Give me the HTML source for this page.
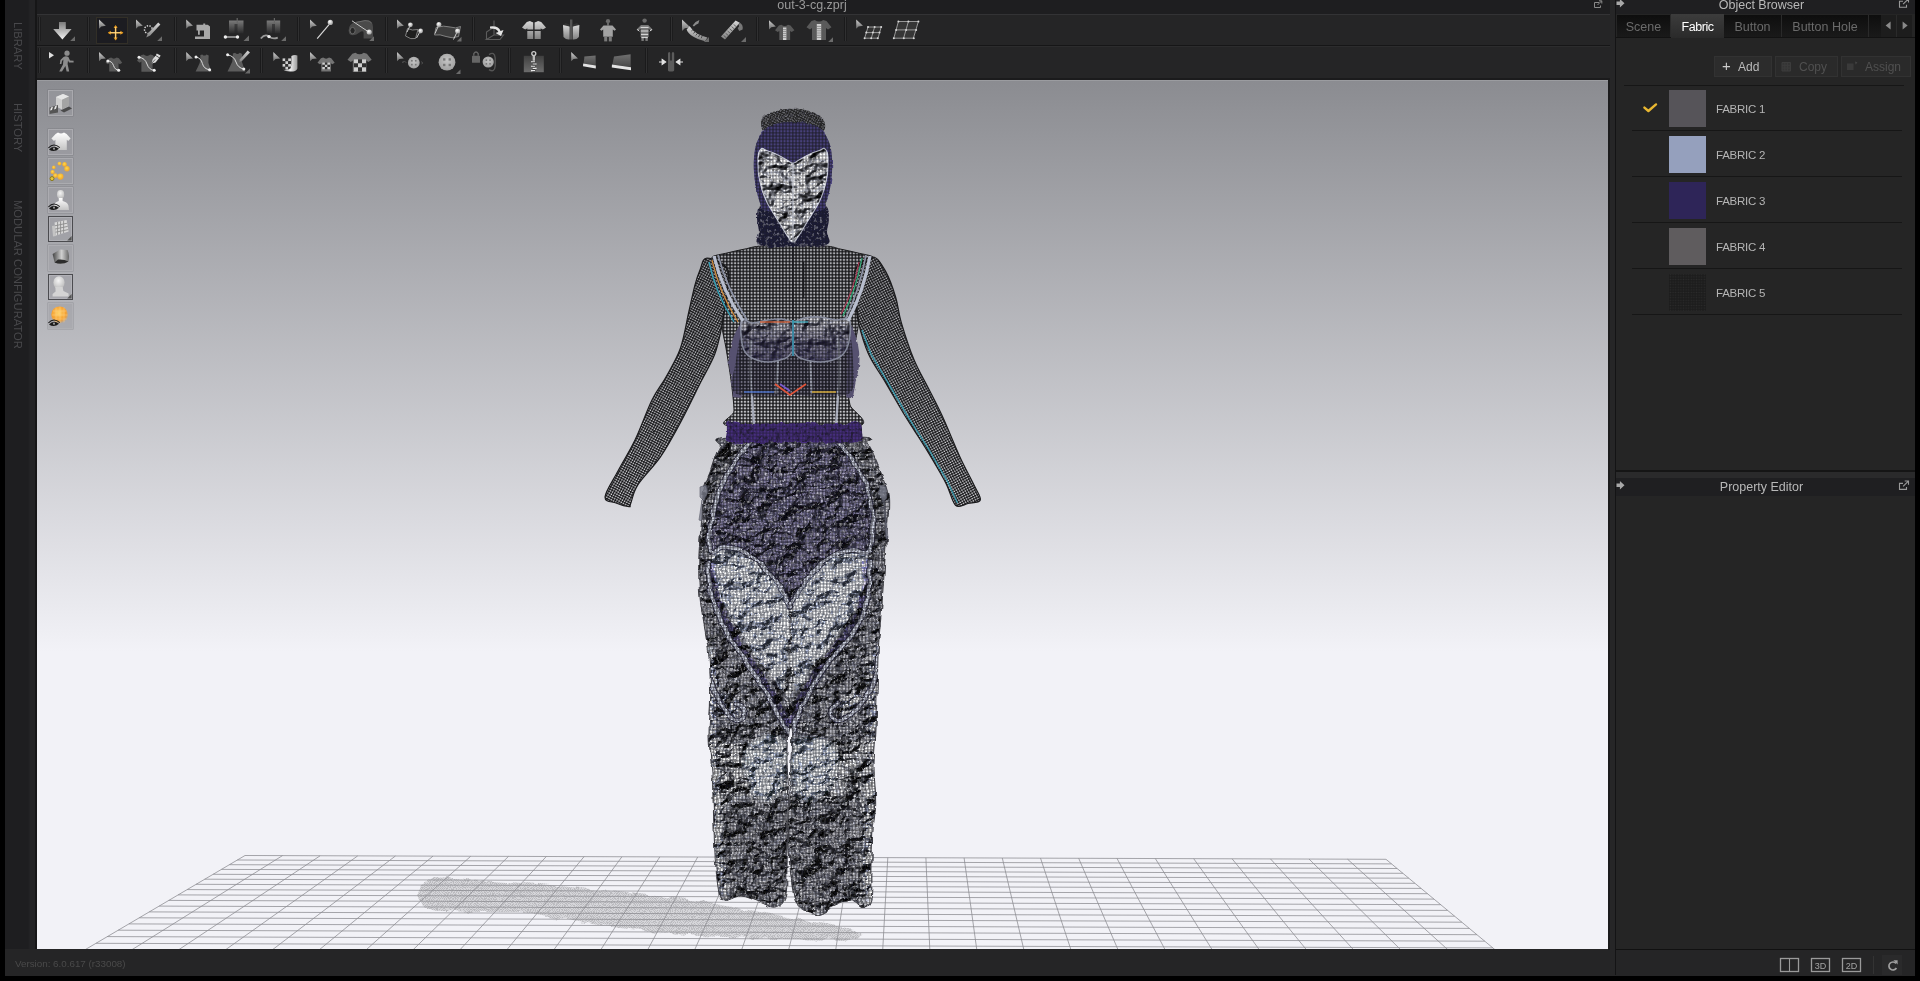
<!DOCTYPE html>
<html><head><meta charset="utf-8"><title>CLO</title>
<style>
*{box-sizing:border-box;margin:0;padding:0}
html,body{width:1920px;height:981px;overflow:hidden;background:#000;font-family:"Liberation Sans",sans-serif;font-size:12px;color:#bbb}
.a{position:absolute}
.tab,.btn span,.frow,.tx{opacity:0.999}
#app{position:absolute;left:0;top:0;width:1920px;height:981px;background:#000;overflow:hidden}
#side{left:5px;top:0;width:30px;height:976px;background:linear-gradient(to right,#1e1e20 0,#1e1e20 23px,#232325 25px,#232325 100%)}
#sideline{left:35px;top:0;width:2px;height:975px;background:#161617}
#title{left:37px;top:0;width:1573px;height:14px;background:#1e1e20}
#tb1{left:37px;top:14px;width:1573px;height:31px;background:#252526;border-top:1px solid #333335}
#tb2{left:37px;top:46px;width:1573px;height:32px;background:#252526;border-top:1px solid #2c2c2d}
#tbsep{left:37px;top:45px;width:1573px;height:1px;background:#161617}
#tbbot{left:37px;top:78px;width:1573px;height:2px;background:#1b1b1c}
#vp{left:37px;top:80px;width:1571px;height:869px;background:linear-gradient(to bottom,#9b9ca0 0,#9b9ca0 1px,#8b8c91 1.5px,#f2f2f7 572px,#f2f2f7 100%);overflow:hidden}
#vpr{left:1608px;top:80px;width:2px;height:870px;background:#1b1b1c}
#split{left:1610px;top:0;width:5px;height:976px;background:#262627}
#splitl{left:1615px;top:0;width:1px;height:975px;background:#141415}
#status{left:5px;top:949px;width:1910px;height:27px;background:#252526}
#rp{left:1616px;top:0;width:299px;height:950px;background:#252525}
#rph{left:1616px;top:0;width:299px;height:14px;background:#1f1f21}
#tabs{left:1616px;top:14px;width:299px;height:24px;background:#252525}
#tabsbg{left:1617px;top:15px;width:264px;height:22px;background:linear-gradient(#0e0e0e,#1a1a1a)}
#tabline{left:1616px;top:37px;width:299px;height:1px;background:#121212}
.tab{top:15px;height:22px;line-height:24px;text-align:center;color:#6a6a6a;font-size:12.5px;border-right:1px solid #2a2a2a}
.tab.on{background:linear-gradient(#3c3c3c,#2a2a2a);color:#fff;letter-spacing:-0.45px;border:0;top:14px;height:24px;line-height:26px}
.btn{top:56px;height:21px;background:#2c2c2c;border:1px solid #323232;color:#bbb;font-size:12px;line-height:20px}
.btn.dis{color:#505050;background:#2a2a2a}
.hl{height:1px;background:#161616;border-bottom:0}
.frow{left:1716px;font-size:11.5px;color:#b4b4b4;line-height:14px;letter-spacing:-0.25px}
.sw{left:1669px;width:37px;height:37px}

.vt{position:absolute;left:18px;transform-origin:0 0;transform:rotate(90deg);white-space:nowrap;font-size:11.2px;color:#48484b;line-height:12px;height:12px;opacity:0.999}
.vb{position:absolute;left:47.5px;width:25.5px;height:26px;border:1px solid rgba(178,178,183,.7);background:rgba(156,156,161,.5);box-shadow:0 0 0 0.5px rgba(90,90,95,.35)}
.vb.dk{border-color:rgba(60,60,64,.85);box-shadow:inset 0 0 0 1px rgba(190,190,195,.5)}
</style></head>
<body><div id="app">
<div id="side" class="a"></div><div id="sideline" class="a"></div>
<div id="title" class="a"></div><div id="tb1" class="a"></div><div id="tbsep" class="a"></div><div id="tb2" class="a"></div><div id="tbbot" class="a"></div>
<div id="status" class="a"></div>
<div id="split" class="a"></div><div id="splitl" class="a"></div>
<div id="rp" class="a"></div><div id="rph" class="a"></div><div id="tabs" class="a"></div><div id="tabsbg" class="a"></div><div id="tabline" class="a"></div>
<div class="a tab " style="left:1617px;width:54px">Scene</div>
<div class="a tab on" style="left:1671px;width:53px">Fabric</div>
<div class="a tab " style="left:1724px;width:58px">Button</div>
<div class="a tab " style="left:1782px;width:87px">Button Hole</div>
<div class="a" style="left:1616px;top:-2px;width:291px;text-align:center;font-size:12.5px;color:#b8b8b8;line-height:14px;opacity:0.999">Object Browser</div>
<div class="a" style="left:37px;top:-2px;width:1550px;text-align:center;font-size:12.5px;color:#9a9a9a;line-height:14px;opacity:0.999">out-3-cg.zprj</div>
<div class="a btn" style="left:1714px;width:58px"><span class="a" style="left:7px;top:-1px;font-size:15px;color:#ccc">+</span><span class="a" style="left:23px;top:0">Add</span></div>
<div class="a btn dis" style="left:1775px;width:63px"><span class="a" style="left:23px;top:0">Copy</span></div>
<div class="a btn dis" style="left:1841px;width:70px"><span class="a" style="left:23px;top:0">Assign</span></div>
<div class="a hl" style="left:1624px;top:85px;width:280px"></div>
<div class="a sw" style="top:90px;background:#565459"></div>
<div class="a frow" style="top:102px">FABRIC 1</div>
<div class="a hl" style="left:1632px;top:130px;width:270px"></div>
<div class="a sw" style="top:136px;background:#95a0bd"></div>
<div class="a frow" style="top:148px">FABRIC 2</div>
<div class="a hl" style="left:1632px;top:176px;width:270px"></div>
<div class="a sw" style="top:182px;background:#2e2558"></div>
<div class="a frow" style="top:194px">FABRIC 3</div>
<div class="a hl" style="left:1632px;top:222px;width:270px"></div>
<div class="a sw" style="top:228px;background:#5f5c5e"></div>
<div class="a frow" style="top:240px">FABRIC 4</div>
<div class="a hl" style="left:1632px;top:268px;width:270px"></div>
<div class="a sw" style="top:274px;background:#1d1d1d"></div>
<div class="a frow" style="top:286px">FABRIC 5</div>
<div class="a hl" style="left:1632px;top:314px;width:270px"></div>
<div class="a" style="left:1616px;top:470px;width:299px;height:2px;background:#151515"></div>
<div class="a" style="left:1616px;top:472px;width:299px;height:6px;background:#2a2a2b"></div>
<div class="a" style="left:1616px;top:478px;width:299px;height:18px;background:#1f1f21"></div>
<div class="a" style="left:1616px;top:479px;width:291px;text-align:center;font-size:12.5px;color:#b8b8b8;line-height:16px;opacity:0.999">Property Editor</div>
<div class="a" style="left:1616px;top:949px;width:299px;height:1px;background:#111"></div>
<div class="a" style="left:15px;top:958px;font-size:9.8px;color:#4a4a4a;line-height:12px;opacity:0.999">Version: 6.0.617 (r33008)</div>
<div id="vp" class="a"><svg class="a" style="left:0;top:0" width="1571" height="869" viewBox="37 80 1571 869">
<defs id="defs"></defs>
<defs><pattern id="shd" width="2" height="2" patternUnits="userSpaceOnUse"><rect width="2" height="2" fill="#d3d3d7"/><rect width="1" height="1" fill="#b4b4b8"/><rect x="1" y="1" width="1" height="1" fill="#bdbdc1"/></pattern><filter id="shr" x="-5%" y="-10%" width="110%" height="120%"><feTurbulence type="fractalNoise" baseFrequency="0.08" numOctaves="2" seed="2" result="t"/><feDisplacementMap in="SourceGraphic" in2="t" scale="7" xChannelSelector="R" yChannelSelector="G"/></filter></defs><path d="M420 884 L432 879 L455 878 L491 881 L540 884 L600 890 L686 899 L760 912 L853 929 L864 935 L846 940 L780 939 L699 936 L620 928 L560 919 L520 912 L480 912 L440 911 L422 906 L417 895 Z" fill="url(#shd)" opacity="0.9" filter="url(#shr)"/>
<path d="M245.0 855.5L81.2 952.0M282.5 855.6L128.3 952.0M320.1 855.8L175.3 952.0M357.7 855.9L222.4 952.0M395.4 856.0L269.5 952.0M433.0 856.1L316.6 952.0M470.7 856.3L363.7 952.0M508.5 856.4L410.8 952.0M546.3 856.5L457.9 952.0M584.1 856.6L505.0 952.0M621.9 856.8L552.2 952.0M659.8 856.9L599.4 952.0M697.7 857.0L646.5 952.0M735.7 857.1L693.7 952.0M773.6 857.3L740.9 952.0M811.7 857.4L788.1 952.0M849.7 857.5L835.4 952.0M887.8 857.6L882.6 952.0M925.9 857.8L929.9 952.0M964.1 857.9L977.1 952.0M1002.3 858.0L1024.4 952.0M1040.5 858.1L1071.7 952.0M1078.7 858.3L1119.0 952.0M1117.0 858.4L1166.3 952.0M1155.3 858.5L1213.6 952.0M1193.7 858.7L1260.9 952.0M1232.1 858.8L1308.3 952.0M1270.5 858.9L1355.6 952.0M1309.0 859.0L1403.0 952.0M1347.5 859.2L1450.4 952.0M1386.0 859.3L1497.8 952.0M245.0 855.5L1386.0 859.3M237.3 860.0L1391.5 863.9M229.5 864.7L1397.1 868.5M221.4 869.4L1402.9 873.3M213.2 874.3L1408.8 878.2M204.7 879.2L1414.9 883.3M196.0 884.3L1421.1 888.4M187.2 889.6L1427.5 893.7M178.1 894.9L1434.0 899.1M168.7 900.4L1440.7 904.7M159.2 906.1L1447.6 910.4M149.3 911.9L1454.6 916.2M139.3 917.8L1461.9 922.2M128.9 923.9L1469.3 928.4M118.2 930.2L1476.9 934.7M107.3 936.6L1484.8 941.2M96.1 943.3L1492.8 947.9M84.5 950.1L1501.1 954.8M72.6 957.1L1509.7 961.9" stroke="#8a8a8f" stroke-width="0.75" fill="none"/>
<defs>
<pattern id="mesh" width="3.3" height="3.3" patternUnits="userSpaceOnUse"><path d="M0 0.8H3.3M0.8 0V3.3" stroke="#141416" stroke-width="1.28"/></pattern>
<pattern id="meshL" width="2.5" height="2.5" patternUnits="userSpaceOnUse" patternTransform="rotate(28)"><path d="M0 0.6H2.5M0.6 0V2.5" stroke="#161618" stroke-width="1.06"/></pattern>
<pattern id="meshR" width="2.5" height="2.5" patternUnits="userSpaceOnUse" patternTransform="rotate(-28)"><path d="M0 0.6H2.5M0.6 0V2.5" stroke="#161618" stroke-width="1.06"/></pattern>
<pattern id="mesh2" width="3.3" height="3.3" patternUnits="userSpaceOnUse"><path d="M0 0.8H3.3M0.8 0V3.3" stroke="#17171c" stroke-width="0.95"/></pattern>
<filter id="fold" x="0" y="0" width="100%" height="100%" color-interpolation-filters="sRGB">
<feTurbulence type="fractalNoise" baseFrequency="0.05 0.03" numOctaves="4" seed="7"/>
<feColorMatrix type="matrix" values="0 0 0 0 0.06  0 0 0 0 0.06  0 0 0 0 0.09  -5 0 0 0 2.55"/>
</filter>
<filter id="shine" x="0" y="0" width="100%" height="100%" color-interpolation-filters="sRGB">
<feTurbulence type="fractalNoise" baseFrequency="0.07 0.045" numOctaves="4" seed="23"/>
<feColorMatrix type="matrix" values="0 0 0 0 0.93  0 0 0 0 0.94  0 0 0 0 1  5 0 0 0 -2.55"/>
</filter>
<filter id="spark" x="0" y="0" width="100%" height="100%" color-interpolation-filters="sRGB">
<feTurbulence type="fractalNoise" baseFrequency="0.35 0.3" numOctaves="2" seed="11"/>
<feColorMatrix type="matrix" values="0 0 0 0 1  0 0 0 0 1  0 0 0 0 1  6 0 0 0 -3.2"/>
</filter>
<filter id="sparkd" x="0" y="0" width="100%" height="100%" color-interpolation-filters="sRGB">
<feTurbulence type="fractalNoise" baseFrequency="0.3 0.25" numOctaves="2" seed="5"/>
<feColorMatrix type="matrix" values="0 0 0 0 0.08  0 0 0 0 0.08  0 0 0 0 0.1  6 0 0 0 -3.2"/>
</filter>
<filter id="foil" x="0" y="0" width="100%" height="100%" color-interpolation-filters="sRGB">
<feTurbulence type="fractalNoise" baseFrequency="0.055 0.075" numOctaves="5" seed="3" result="n"/>
<feDiffuseLighting in="n" surfaceScale="14" diffuseConstant="1.12" lighting-color="#c8ccda" result="d"><feDistantLight azimuth="225" elevation="52"/></feDiffuseLighting>
<feSpecularLighting in="n" surfaceScale="14" specularConstant="1.7" specularExponent="9" lighting-color="#ffffff" result="sp"><feDistantLight azimuth="225" elevation="52"/></feSpecularLighting>
<feComposite in="sp" in2="d" operator="arithmetic" k1="0" k2="1" k3="1" k4="0" result="c"/>
<feColorMatrix in="c" type="matrix" values="1 0 0 0 0  0 1 0 0 0  0 0 1 0 0  0 0 0 0 1"/>
</filter>
<filter id="foilf" x="0" y="0" width="100%" height="100%" color-interpolation-filters="sRGB">
<feTurbulence type="fractalNoise" baseFrequency="0.07 0.09" numOctaves="3" seed="8" result="n"/>
<feDiffuseLighting in="n" surfaceScale="10" diffuseConstant="1.2" lighting-color="#ccd0de" result="d"><feDistantLight azimuth="230" elevation="58"/></feDiffuseLighting>
<feSpecularLighting in="n" surfaceScale="10" specularConstant="1.5" specularExponent="9" lighting-color="#ffffff" result="sp"><feDistantLight azimuth="230" elevation="58"/></feSpecularLighting>
<feComposite in="sp" in2="d" operator="arithmetic" k1="0" k2="1" k3="1" k4="0" result="c"/>
<feColorMatrix in="c" type="matrix" values="1 0 0 0 0  0 1 0 0 0  0 0 1 0 0  0 0 0 0 1"/>
</filter>
<filter id="rough" x="-5%" y="-5%" width="110%" height="110%"><feTurbulence type="fractalNoise" baseFrequency="0.12" numOctaves="2" seed="4" result="t"/><feDisplacementMap in="SourceGraphic" in2="t" scale="5" xChannelSelector="R" yChannelSelector="G"/></filter>
<filter id="rough2" x="-5%" y="-5%" width="110%" height="110%"><feTurbulence type="fractalNoise" baseFrequency="0.2" numOctaves="2" seed="9" result="t"/><feDisplacementMap in="SourceGraphic" in2="t" scale="3" xChannelSelector="R" yChannelSelector="G"/></filter>
<filter id="roughP" x="-3%" y="-2%" width="106%" height="104%"><feTurbulence type="fractalNoise" baseFrequency="0.06 0.09" numOctaves="2" seed="14" result="t"/><feDisplacementMap in="SourceGraphic" in2="t" scale="5" xChannelSelector="R" yChannelSelector="G"/></filter>
<linearGradient id="braG" x1="0" y1="0" x2="0" y2="1"><stop offset="0" stop-color="#2a2450" stop-opacity="0"/><stop offset="0.45" stop-color="#2a2450" stop-opacity="0.45"/><stop offset="1" stop-color="#2a2450" stop-opacity="0.75"/></linearGradient>
<filter id="blur2"><feGaussianBlur stdDeviation="2"/></filter>
<filter id="blur4"><feGaussianBlur stdDeviation="4"/></filter>
<clipPath id="cpPants"><path d="M728.0 437.0C704.7 438.5 722.2 442.7 720.0 446.0C717.8 449.3 716.6 452.8 715.0 457.0C713.4 461.2 712.0 466.7 710.5 471.0C709.0 475.3 707.0 478.7 705.8 482.7C704.5 486.7 703.6 489.5 703.0 495.0C702.4 500.5 702.6 510.2 702.3 515.5C702.0 520.8 701.6 519.6 701.0 527.0C700.4 534.4 699.0 548.2 698.8 560.0C698.6 571.8 698.8 585.1 700.0 597.6C701.2 610.1 704.3 625.1 705.8 635.0C707.3 644.9 708.2 646.5 709.0 656.7C709.8 667.0 710.6 683.3 710.6 696.5C710.6 709.7 708.8 723.2 709.0 736.0C709.2 748.8 711.2 759.7 712.0 773.0C712.8 786.3 713.1 802.2 713.6 815.7C714.1 829.2 714.3 842.1 715.0 854.0C715.7 865.9 716.7 879.2 718.0 887.0C719.3 894.8 719.0 899.3 722.8 900.8C726.6 902.3 734.9 895.8 741.0 896.0C747.1 896.2 753.8 900.2 759.5 902.0C765.2 903.8 770.7 908.0 775.0 907.0C779.3 906.0 783.5 902.7 785.5 896.0C787.5 889.3 786.6 876.9 787.0 866.6C787.4 856.3 787.4 846.6 787.6 834.0C787.9 821.4 788.6 803.2 788.5 791.0C788.4 778.8 787.1 769.9 787.0 760.7C786.9 751.5 787.2 741.5 787.6 736.0C788.0 730.5 788.8 728.0 789.5 728.0C790.2 728.0 791.5 725.5 791.6 736.0C791.7 746.5 790.5 774.7 790.0 791.0C789.5 807.3 788.5 821.4 788.5 834.0C788.5 846.6 789.0 855.8 790.0 866.6C791.0 877.4 792.7 892.0 794.7 899.0C796.7 906.0 798.2 905.8 802.0 908.4C805.8 911.0 812.4 914.7 817.6 914.5C822.8 914.3 827.4 909.3 833.0 907.0C838.6 904.7 845.9 900.8 851.0 900.8C856.1 900.8 860.2 907.3 863.5 907.0C866.8 906.7 869.6 905.7 871.0 899.0C872.4 892.3 871.7 877.4 872.0 866.6C872.3 855.8 872.1 844.5 872.7 834.0C873.3 823.5 875.5 814.7 875.7 803.5C875.9 792.3 874.0 778.0 874.0 766.8C874.0 755.5 875.2 747.7 875.7 736.0C876.2 724.3 876.6 709.7 877.0 696.5C877.4 683.3 877.6 667.0 878.0 656.7C878.4 646.5 878.7 643.0 879.3 635.0C879.9 627.0 880.8 619.2 881.6 609.0C882.4 598.8 883.2 585.3 884.0 574.0C884.8 562.7 885.5 552.7 886.3 541.0C887.1 529.3 888.7 512.7 888.7 503.8C888.7 494.9 887.9 493.3 886.3 487.4C884.7 481.5 881.7 474.5 879.3 468.6C876.9 462.7 874.0 456.3 872.0 452.0C870.0 447.7 869.0 445.5 867.0 443.0C865.0 440.5 883.2 438.0 860.0 437.0C836.8 436.0 751.3 435.5 728.0 437.0Z"/></clipPath>
<clipPath id="cpHead"><path d="M793.0 122.0C797.3 122.0 801.8 122.2 806.0 123.0C810.2 123.8 814.8 125.2 818.0 127.0C821.2 128.8 823.0 131.0 825.0 134.0C827.0 137.0 828.8 141.0 830.0 145.0C831.2 149.0 831.7 153.5 832.0 158.0C832.3 162.5 832.3 167.0 832.0 172.0C831.7 177.0 831.0 182.8 830.0 188.0C829.0 193.2 827.3 199.3 826.0 203.0C824.7 206.7 827.5 208.2 822.0 210.0C816.5 211.8 802.7 214.0 793.0 214.0C783.3 214.0 769.5 211.8 764.0 210.0C758.5 208.2 761.3 206.7 760.0 203.0C758.7 199.3 757.0 193.2 756.0 188.0C755.0 182.8 754.3 177.0 754.0 172.0C753.7 167.0 753.7 162.5 754.0 158.0C754.3 153.5 754.8 149.0 756.0 145.0C757.2 141.0 759.0 137.0 761.0 134.0C763.0 131.0 764.8 128.8 768.0 127.0C771.2 125.2 775.8 123.8 780.0 123.0C784.2 122.2 788.7 122.0 793.0 122.0Z"/></clipPath>
<clipPath id="cpMask"><path d="M760.0 150.0C762.7 146.3 763.2 149.7 768.0 151.0C772.8 152.3 772.9 152.6 778.0 155.0C783.1 157.4 783.0 157.9 787.0 160.0C791.0 162.1 789.8 163.0 793.0 163.0C796.2 163.0 795.0 162.1 799.0 160.0C803.0 157.9 802.9 157.4 808.0 155.0C813.1 152.6 813.2 152.3 818.0 151.0C822.8 149.7 823.3 146.3 826.0 150.0C828.7 153.7 828.0 156.5 828.0 165.0C828.0 173.5 827.9 173.2 826.0 182.0C824.1 190.8 824.2 190.3 821.0 198.0C817.8 205.7 818.0 204.1 814.0 211.0C810.0 217.9 810.3 217.1 806.0 224.0C801.7 230.9 801.5 232.2 798.0 237.0C794.5 241.8 795.7 242.0 793.0 242.0C790.3 242.0 791.5 241.8 788.0 237.0C784.5 232.2 784.3 230.9 780.0 224.0C775.7 217.1 776.0 217.9 772.0 211.0C768.0 204.1 768.2 205.7 765.0 198.0C761.8 190.3 761.9 190.8 760.0 182.0C758.1 173.2 758.0 173.5 758.0 165.0C758.0 156.5 757.3 153.7 760.0 150.0Z"/></clipPath>
<clipPath id="cpBra"><path d="M742.0 319.0C743.8 317.0 747.7 322.8 752.0 323.0C756.3 323.2 763.0 320.7 768.0 320.0C773.0 319.3 777.8 318.7 782.0 319.0C786.2 319.3 789.3 322.2 793.0 322.0C796.7 321.8 799.5 318.8 804.0 318.0C808.5 317.2 814.7 316.7 820.0 317.0C825.3 317.3 831.2 319.7 836.0 320.0C840.8 320.3 846.7 316.5 849.0 319.0C851.3 321.5 850.5 329.8 850.0 335.0C849.5 340.2 848.0 346.2 846.0 350.0C844.0 353.8 842.3 356.0 838.0 358.0C833.7 360.0 826.3 362.0 820.0 362.0C813.7 362.0 804.5 359.7 800.0 358.0C795.5 356.3 795.3 352.0 793.0 352.0C790.7 352.0 790.2 356.3 786.0 358.0C781.8 359.7 773.7 362.0 768.0 362.0C762.3 362.0 756.0 360.0 752.0 358.0C748.0 356.0 745.8 353.8 744.0 350.0C742.2 346.2 741.3 340.2 741.0 335.0C740.7 329.8 740.2 321.0 742.0 319.0Z"/></clipPath>
<clipPath id="cpNeck"><path d="M760.0 206.0C763.0 203.7 769.5 204.0 775.0 204.0C780.5 204.0 787.0 206.0 793.0 206.0C799.0 206.0 805.5 204.0 811.0 204.0C816.5 204.0 823.0 203.7 826.0 206.0C829.0 208.3 828.8 213.7 829.0 218.0C829.2 222.3 827.0 227.8 827.0 232.0C827.0 236.2 831.0 240.5 829.0 243.0C827.0 245.5 821.0 246.5 815.0 247.0C809.0 247.5 800.3 246.0 793.0 246.0C785.7 246.0 777.0 247.5 771.0 247.0C765.0 246.5 759.0 245.5 757.0 243.0C755.0 240.5 759.0 236.2 759.0 232.0C759.0 227.8 756.8 222.3 757.0 218.0C757.2 213.7 757.0 208.3 760.0 206.0Z"/></clipPath>
<clipPath id="cpBelt"><path d="M729.0 422.0C732.0 420.7 734.3 423.8 745.0 424.0C755.7 424.2 777.2 423.0 793.0 423.0C808.8 423.0 829.0 424.2 840.0 424.0C851.0 423.8 855.3 420.7 859.0 422.0C862.7 423.3 861.8 428.8 862.0 432.0C862.2 435.2 863.7 439.2 860.0 441.0C856.3 442.8 851.2 442.8 840.0 443.0C828.8 443.2 808.8 442.0 793.0 442.0C777.2 442.0 755.8 443.2 745.0 443.0C734.2 442.8 731.0 442.8 728.0 441.0C725.0 439.2 726.8 435.2 727.0 432.0C727.2 428.8 726.0 423.3 729.0 422.0Z"/></clipPath>
</defs>
<path d="M707.0 258.0C702.3 258.0 702.0 265.4 700.0 270.0C698.0 274.6 696.6 278.8 694.8 285.6C693.0 292.4 691.4 300.6 689.0 311.0C686.6 321.4 684.3 337.0 680.5 348.0C676.7 359.0 670.8 368.3 666.0 377.0C661.2 385.7 657.2 389.5 652.0 400.0C646.8 410.5 640.7 428.2 635.0 440.0C629.3 451.8 623.0 461.5 618.0 471.0C613.0 480.5 605.3 491.7 605.0 497.0C604.7 502.3 612.0 501.4 616.0 503.0C620.0 504.6 626.6 506.5 629.0 506.6C631.4 506.7 629.1 507.4 630.6 503.8C632.1 500.2 632.8 492.9 637.8 485.0C642.8 477.1 653.5 467.1 660.6 456.7C667.7 446.3 673.9 434.9 680.5 422.5C687.1 410.1 694.8 394.0 700.5 382.6C706.2 371.2 711.2 363.5 714.8 354.0C718.4 344.5 720.1 334.5 722.0 325.5C723.9 316.5 725.0 309.2 726.0 300.0C727.0 290.8 731.2 277.0 728.0 270.0C724.8 263.0 711.7 258.0 707.0 258.0Z" fill="url(#meshL)" stroke="#1a1a1c" stroke-width="1.2"/>
<path d="M872.8 257.0C877.9 257.2 881.8 264.7 885.6 271.4C889.4 278.1 893.0 288.4 895.6 297.0C898.2 305.6 898.2 312.2 901.3 322.7C904.4 333.2 909.5 348.9 914.0 359.8C918.5 370.7 923.6 378.8 928.4 388.3C933.2 397.8 937.4 405.4 942.6 416.8C947.8 428.2 954.6 445.3 959.8 456.7C965.0 468.1 970.6 477.8 974.0 485.0C977.4 492.2 981.3 496.9 980.3 500.0C979.3 503.1 972.1 502.6 968.0 503.5C963.9 504.4 959.2 508.7 955.5 505.2C951.8 501.7 950.5 491.9 945.5 482.4C940.5 472.9 932.1 458.9 925.5 448.0C918.9 437.1 912.2 427.7 905.6 416.8C899.0 405.9 891.8 393.1 885.6 382.6C879.4 372.1 873.0 364.0 868.5 354.0C864.0 344.0 860.6 331.7 858.5 322.7C856.4 313.7 856.6 308.8 856.0 300.0C855.4 291.2 852.2 277.2 855.0 270.0C857.8 262.8 867.7 256.8 872.8 257.0Z" fill="url(#meshR)" stroke="#1a1a1c" stroke-width="1.2"/>
<path d="M763.0 246.0C752.5 246.4 749.8 248.1 745.0 249.0C740.2 249.9 731.4 251.9 727.0 253.0C722.6 254.1 712.9 255.5 712.0 257.0C711.1 258.5 717.9 262.1 720.0 264.0C722.1 265.9 727.2 266.2 728.0 271.0C728.8 275.8 726.8 292.8 726.0 300.0C725.2 307.2 722.0 318.6 722.0 325.0C722.0 331.4 724.8 340.7 726.0 348.0C727.2 355.3 729.9 371.6 731.0 380.0C732.1 388.4 734.1 404.9 734.0 411.0C733.9 417.1 713.5 424.0 730.0 426.0C746.5 428.0 842.0 428.8 858.0 426.0C874.0 423.2 851.3 410.9 850.0 405.0C848.7 399.1 847.5 389.6 848.0 382.0C848.5 374.4 852.6 355.9 854.0 348.0C855.4 340.1 858.2 329.1 858.5 322.7C858.8 316.3 856.5 306.9 856.0 300.0C855.5 293.1 853.9 275.8 855.0 271.0C856.1 266.2 861.6 265.9 864.0 264.0C866.4 262.1 873.6 258.5 872.8 257.0C872.0 255.5 862.4 254.1 858.0 253.0C853.6 251.9 844.5 249.9 840.0 249.0C835.5 248.1 834.3 246.4 824.0 246.0C813.7 245.6 773.5 245.6 763.0 246.0Z" fill="url(#mesh)" stroke="#1a1a1c" stroke-width="1"/>
<g filter="url(#roughP)">
<g clip-path="url(#cpPants)" style="isolation:isolate">
<rect x="690" y="415" width="205" height="510" fill="#9a9ca8"/>
<rect x="690" y="415" width="205" height="510" filter="url(#foil)"/>
<path d="M751.0 441.0C747.8 445.2 741.2 452.2 735.0 462.0C728.8 471.8 724.6 478.4 720.0 490.0C715.4 501.6 714.0 508.0 712.0 520.0C710.0 532.0 707.4 544.4 710.0 550.0C712.6 555.6 718.0 547.4 725.0 548.0C732.0 548.6 737.0 549.0 745.0 553.0C753.0 557.0 757.8 561.0 765.0 568.0C772.2 575.0 776.2 580.4 781.0 588.0C785.8 595.6 787.4 602.4 789.0 606.0L790 606 L798 593 L812 573 L834 555 L853 549 L869 550 L873 520 L868 490 L854 462 L838 441Z" fill="#9a94b6" style="mix-blend-mode:multiply"/>
<path d="M751.0 441.0C747.8 445.2 741.2 452.2 735.0 462.0C728.8 471.8 724.6 478.4 720.0 490.0C715.4 501.6 714.0 508.0 712.0 520.0C710.0 532.0 707.4 544.4 710.0 550.0C712.6 555.6 718.0 547.4 725.0 548.0C732.0 548.6 737.0 549.0 745.0 553.0C753.0 557.0 757.8 561.0 765.0 568.0C772.2 575.0 776.2 580.4 781.0 588.0C785.8 595.6 787.4 602.4 789.0 606.0L790 606 L798 593 L812 573 L834 555 L853 549 L869 550 L873 520 L868 490 L854 462 L838 441Z" fill="#2a2450" opacity="0.15"/>
<path d="M700 436 L751 437 L735 462 L720 490 L712 520 L708 560 L695 560Z M890 436 L838 437 L854 462 L868 490 L873 520 L870 560 L892 560Z" fill="#a4a4ac" style="mix-blend-mode:multiply"/>
<g style="mix-blend-mode:multiply"><path d="M696 556 L711 557 L718 590 L733 622 L752 650 L772 676 L788 700 L788 738 L750 742 L700 738Z" fill="#b4b4bc" filter="url(#blur2)"/>
<path d="M890 556 L868 557 L863 590 L848 620 L827 648 L808 672 L792 700 L792 738 L830 742 L884 738Z" fill="#b4b4bc" filter="url(#blur2)"/>
<path d="M722 800 L790 796 L790 905 L722 905Z M790 796 L864 800 L862 914 L792 914Z" fill="#b0b0b8" filter="url(#blur4)"/></g>
<path d="M708.0 561.6C708.6 567.9 708.2 580.8 711.0 593.0C713.8 605.2 716.4 610.9 722.0 622.7C727.6 634.5 732.2 641.2 739.0 652.0C745.8 662.8 749.7 666.7 756.0 676.5C762.3 686.3 765.3 691.7 770.7 701.0C776.1 710.3 779.5 716.8 783.0 723.0C786.5 729.2 787.0 730.2 788.0 732.0" fill="none" stroke="#9084c4" stroke-width="8" style="mix-blend-mode:multiply" transform="translate(3 -2)"/>
<path d="M869.7 561.6C869.5 567.9 870.7 581.1 868.5 593.3C866.3 605.5 864.1 612.0 858.7 622.7C853.3 633.4 848.9 637.2 841.6 647.0C834.3 656.8 828.8 661.8 822.0 671.6C815.2 681.4 812.3 687.2 807.4 696.0C802.5 704.8 800.5 708.4 797.6 715.6C794.7 722.8 793.7 728.7 792.7 732.0" fill="none" stroke="#9084c4" stroke-width="8" style="mix-blend-mode:multiply" transform="translate(-3 -2)"/>
<g style="mix-blend-mode:color-dodge"><path d="M711.0 557.0C712.2 550.5 719.3 551.2 725.0 551.0C730.7 550.8 738.3 552.5 745.0 556.0C751.7 559.5 759.0 566.3 765.0 572.0C771.0 577.7 777.2 584.0 781.0 590.0C784.8 596.0 786.8 599.7 788.0 608.0C789.2 616.3 789.2 626.3 788.5 640.0C787.8 653.7 786.8 684.0 784.0 690.0C781.2 696.0 777.3 682.7 772.0 676.0C766.7 669.3 758.5 659.0 752.0 650.0C745.5 641.0 738.7 632.0 733.0 622.0C727.3 612.0 721.7 600.8 718.0 590.0C714.3 579.2 709.8 563.5 711.0 557.0Z" fill="#7c808c"/><path d="M868.0 557.0C866.3 550.7 858.7 551.8 853.0 552.0C847.3 552.2 840.8 554.0 834.0 558.0C827.2 562.0 818.0 569.7 812.0 576.0C806.0 582.3 801.3 589.8 798.0 596.0C794.7 602.2 793.1 605.7 792.0 613.0C790.9 620.3 790.8 627.2 791.5 640.0C792.2 652.8 793.2 684.7 796.0 690.0C798.8 695.3 802.8 679.0 808.0 672.0C813.2 665.0 820.3 656.7 827.0 648.0C833.7 639.3 842.0 629.7 848.0 620.0C854.0 610.3 859.7 600.5 863.0 590.0C866.3 579.5 869.7 563.3 868.0 557.0Z" fill="#7c808c"/>
<path d="M752.0 742.0C755.7 738.0 761.3 736.7 766.0 736.0C770.7 735.3 776.7 736.0 780.0 738.0C783.3 740.0 785.0 742.7 786.0 748.0C787.0 753.3 787.0 763.0 786.0 770.0C785.0 777.0 782.7 785.0 780.0 790.0C777.3 795.0 774.0 799.2 770.0 800.0C766.0 800.8 759.7 798.3 756.0 795.0C752.3 791.7 750.0 785.8 748.0 780.0C746.0 774.2 743.3 766.3 744.0 760.0C744.7 753.7 748.3 746.0 752.0 742.0Z" fill="#7c808c" filter="url(#blur2)"/><path d="M793.0 745.0C794.3 740.5 796.3 739.2 800.0 738.0C803.7 736.8 810.0 737.0 815.0 738.0C820.0 739.0 826.2 740.3 830.0 744.0C833.8 747.7 837.3 754.0 838.0 760.0C838.7 766.0 836.7 774.2 834.0 780.0C831.3 785.8 826.7 791.7 822.0 795.0C817.3 798.3 810.5 800.8 806.0 800.0C801.5 799.2 797.3 795.8 795.0 790.0C792.7 784.2 792.3 772.5 792.0 765.0C791.7 757.5 791.7 749.5 793.0 745.0Z" fill="#7c808c" filter="url(#blur2)"/>
<path d="M706.0 640.0C707.3 640.5 714.0 650.0 716.0 660.0C718.0 670.0 718.0 686.7 718.0 700.0C718.0 713.3 715.7 726.7 716.0 740.0C716.3 753.3 719.0 766.7 720.0 780.0C721.0 793.3 721.3 806.7 722.0 820.0C722.7 833.3 723.0 848.3 724.0 860.0C725.0 871.7 728.7 884.5 728.0 890.0C727.3 895.5 722.2 899.3 720.0 893.0C717.8 886.7 716.2 865.0 715.0 852.0C713.8 839.0 713.7 828.2 713.0 815.0C712.3 801.8 711.8 786.2 711.0 773.0C710.2 759.8 708.3 748.8 708.0 736.0C707.7 723.2 709.0 709.2 709.0 696.0C709.0 682.8 708.5 666.3 708.0 657.0C707.5 647.7 704.7 639.5 706.0 640.0Z" fill="#6c707b" filter="url(#blur2)"/><path d="M880.0 640.0C878.7 640.5 872.0 650.0 870.0 660.0C868.0 670.0 868.3 686.7 868.0 700.0C867.7 713.3 868.3 726.7 868.0 740.0C867.7 753.3 866.7 766.7 866.0 780.0C865.3 793.3 864.5 806.7 864.0 820.0C863.5 833.3 863.0 848.3 863.0 860.0C863.0 871.7 862.7 884.5 864.0 890.0C865.3 895.5 869.7 897.3 871.0 893.0C872.3 888.7 871.7 873.8 872.0 864.0C872.3 854.2 872.3 844.2 873.0 834.0C873.7 823.8 875.8 814.2 876.0 803.0C876.2 791.8 874.0 778.2 874.0 767.0C874.0 755.8 875.5 747.8 876.0 736.0C876.5 724.2 876.7 709.2 877.0 696.0C877.3 682.8 877.5 666.3 878.0 657.0C878.5 647.7 881.3 639.5 880.0 640.0Z" fill="#6c707b" filter="url(#blur2)"/>
<ellipse cx="729" cy="707" rx="10" ry="13" fill="#6c707b" filter="url(#blur2)" transform="rotate(-25 729 707)"/><ellipse cx="851" cy="705" rx="10" ry="13" fill="#6c707b" filter="url(#blur2)" transform="rotate(25 851 705)"/>
</g>
<rect x="690" y="415" width="205" height="510" filter="url(#sparkd)" opacity="0.4"/>
<rect x="690" y="415" width="205" height="510" filter="url(#spark)" opacity="0.5"/>
<path d="M751.0 441.0C747.8 445.2 741.2 452.2 735.0 462.0C728.8 471.8 724.6 478.4 720.0 490.0C715.4 501.6 714.0 508.0 712.0 520.0C710.0 532.0 707.4 544.4 710.0 550.0C712.6 555.6 718.0 547.4 725.0 548.0C732.0 548.6 737.0 549.0 745.0 553.0C753.0 557.0 757.8 561.0 765.0 568.0C772.2 575.0 776.2 580.4 781.0 588.0C785.8 595.6 787.4 602.4 789.0 606.0" fill="none" stroke="#2e2d44" stroke-width="5.4" stroke-linecap="round"/>
<path d="M751.0 441.0C747.8 445.2 741.2 452.2 735.0 462.0C728.8 471.8 724.6 478.4 720.0 490.0C715.4 501.6 714.0 508.0 712.0 520.0C710.0 532.0 707.4 544.4 710.0 550.0C712.6 555.6 718.0 547.4 725.0 548.0C732.0 548.6 737.0 549.0 745.0 553.0C753.0 557.0 757.8 561.0 765.0 568.0C772.2 575.0 776.2 580.4 781.0 588.0C785.8 595.6 787.4 602.4 789.0 606.0" fill="none" stroke="#d3d7e6" stroke-width="3.4" stroke-linecap="round"/>
<path d="M838.0 441.0C841.2 445.2 848.0 452.2 854.0 462.0C860.0 471.8 864.2 478.4 868.0 490.0C871.8 501.6 872.8 508.0 873.0 520.0C873.2 532.0 873.0 544.2 869.0 550.0C865.0 555.8 860.0 548.0 853.0 549.0C846.0 550.0 842.2 550.2 834.0 555.0C825.8 559.8 819.2 565.4 812.0 573.0C804.8 580.6 802.4 586.4 798.0 593.0C793.6 599.6 791.6 603.4 790.0 606.0" fill="none" stroke="#2e2d44" stroke-width="5.4" stroke-linecap="round"/>
<path d="M838.0 441.0C841.2 445.2 848.0 452.2 854.0 462.0C860.0 471.8 864.2 478.4 868.0 490.0C871.8 501.6 872.8 508.0 873.0 520.0C873.2 532.0 873.0 544.2 869.0 550.0C865.0 555.8 860.0 548.0 853.0 549.0C846.0 550.0 842.2 550.2 834.0 555.0C825.8 559.8 819.2 565.4 812.0 573.0C804.8 580.6 802.4 586.4 798.0 593.0C793.6 599.6 791.6 603.4 790.0 606.0" fill="none" stroke="#d3d7e6" stroke-width="3.4" stroke-linecap="round"/>
<path d="M708.0 561.6C708.6 567.9 708.2 580.8 711.0 593.0C713.8 605.2 716.4 610.9 722.0 622.7C727.6 634.5 732.2 641.2 739.0 652.0C745.8 662.8 749.7 666.7 756.0 676.5C762.3 686.3 765.3 691.7 770.7 701.0C776.1 710.3 779.5 716.8 783.0 723.0C786.5 729.2 787.0 730.2 788.0 732.0" fill="none" stroke="#2e2d44" stroke-width="5.4" stroke-linecap="round"/>
<path d="M708.0 561.6C708.6 567.9 708.2 580.8 711.0 593.0C713.8 605.2 716.4 610.9 722.0 622.7C727.6 634.5 732.2 641.2 739.0 652.0C745.8 662.8 749.7 666.7 756.0 676.5C762.3 686.3 765.3 691.7 770.7 701.0C776.1 710.3 779.5 716.8 783.0 723.0C786.5 729.2 787.0 730.2 788.0 732.0" fill="none" stroke="#d3d7e6" stroke-width="3.4" stroke-linecap="round"/>
<path d="M869.7 561.6C869.5 567.9 870.7 581.1 868.5 593.3C866.3 605.5 864.1 612.0 858.7 622.7C853.3 633.4 848.9 637.2 841.6 647.0C834.3 656.8 828.8 661.8 822.0 671.6C815.2 681.4 812.3 687.2 807.4 696.0C802.5 704.8 800.5 708.4 797.6 715.6C794.7 722.8 793.7 728.7 792.7 732.0" fill="none" stroke="#2e2d44" stroke-width="5.4" stroke-linecap="round"/>
<path d="M869.7 561.6C869.5 567.9 870.7 581.1 868.5 593.3C866.3 605.5 864.1 612.0 858.7 622.7C853.3 633.4 848.9 637.2 841.6 647.0C834.3 656.8 828.8 661.8 822.0 671.6C815.2 681.4 812.3 687.2 807.4 696.0C802.5 704.8 800.5 708.4 797.6 715.6C794.7 722.8 793.7 728.7 792.7 732.0" fill="none" stroke="#d3d7e6" stroke-width="3.4" stroke-linecap="round"/>
<path d="M704.0 655.0C704.8 659.0 705.9 667.8 708.0 675.0C710.1 682.2 711.7 685.0 714.5 691.0C717.3 697.0 718.9 700.0 722.0 705.0C725.1 710.0 726.6 712.8 730.0 716.0C733.4 719.2 736.0 721.0 739.0 721.0C742.0 721.0 744.2 718.6 745.0 716.0C745.8 713.4 744.8 710.2 743.0 708.0C741.2 705.8 737.4 705.6 736.0 705.0" fill="none" stroke="#2e2d44" stroke-width="5.4" stroke-linecap="round"/>
<path d="M704.0 655.0C704.8 659.0 705.9 667.8 708.0 675.0C710.1 682.2 711.7 685.0 714.5 691.0C717.3 697.0 718.9 700.0 722.0 705.0C725.1 710.0 726.6 712.8 730.0 716.0C733.4 719.2 736.0 721.0 739.0 721.0C742.0 721.0 744.2 718.6 745.0 716.0C745.8 713.4 744.8 710.2 743.0 708.0C741.2 705.8 737.4 705.6 736.0 705.0" fill="none" stroke="#d3d7e6" stroke-width="3.4" stroke-linecap="round"/>
<path d="M878.0 655.0C877.4 659.0 876.8 667.8 875.0 675.0C873.2 682.2 871.8 685.0 869.0 691.0C866.2 697.0 864.4 700.4 861.0 705.0C857.6 709.6 855.8 711.0 852.0 714.0C848.2 717.0 845.8 719.2 842.0 720.0C838.2 720.8 835.2 720.2 833.0 718.0C830.8 715.8 830.0 712.0 831.0 709.0C832.0 706.0 836.6 704.2 838.0 703.0" fill="none" stroke="#2e2d44" stroke-width="5.4" stroke-linecap="round"/>
<path d="M878.0 655.0C877.4 659.0 876.8 667.8 875.0 675.0C873.2 682.2 871.8 685.0 869.0 691.0C866.2 697.0 864.4 700.4 861.0 705.0C857.6 709.6 855.8 711.0 852.0 714.0C848.2 717.0 845.8 719.2 842.0 720.0C838.2 720.8 835.2 720.2 833.0 718.0C830.8 715.8 830.0 712.0 831.0 709.0C832.0 706.0 836.6 704.2 838.0 703.0" fill="none" stroke="#d3d7e6" stroke-width="3.4" stroke-linecap="round"/>
</g>
<path d="M728.0 437.0C704.7 438.5 722.2 442.7 720.0 446.0C717.8 449.3 716.6 452.8 715.0 457.0C713.4 461.2 712.0 466.7 710.5 471.0C709.0 475.3 707.0 478.7 705.8 482.7C704.5 486.7 703.6 489.5 703.0 495.0C702.4 500.5 702.6 510.2 702.3 515.5C702.0 520.8 701.6 519.6 701.0 527.0C700.4 534.4 699.0 548.2 698.8 560.0C698.6 571.8 698.8 585.1 700.0 597.6C701.2 610.1 704.3 625.1 705.8 635.0C707.3 644.9 708.2 646.5 709.0 656.7C709.8 667.0 710.6 683.3 710.6 696.5C710.6 709.7 708.8 723.2 709.0 736.0C709.2 748.8 711.2 759.7 712.0 773.0C712.8 786.3 713.1 802.2 713.6 815.7C714.1 829.2 714.3 842.1 715.0 854.0C715.7 865.9 716.7 879.2 718.0 887.0C719.3 894.8 719.0 899.3 722.8 900.8C726.6 902.3 734.9 895.8 741.0 896.0C747.1 896.2 753.8 900.2 759.5 902.0C765.2 903.8 770.7 908.0 775.0 907.0C779.3 906.0 783.5 902.7 785.5 896.0C787.5 889.3 786.6 876.9 787.0 866.6C787.4 856.3 787.4 846.6 787.6 834.0C787.9 821.4 788.6 803.2 788.5 791.0C788.4 778.8 787.1 769.9 787.0 760.7C786.9 751.5 787.2 741.5 787.6 736.0C788.0 730.5 788.8 728.0 789.5 728.0C790.2 728.0 791.5 725.5 791.6 736.0C791.7 746.5 790.5 774.7 790.0 791.0C789.5 807.3 788.5 821.4 788.5 834.0C788.5 846.6 789.0 855.8 790.0 866.6C791.0 877.4 792.7 892.0 794.7 899.0C796.7 906.0 798.2 905.8 802.0 908.4C805.8 911.0 812.4 914.7 817.6 914.5C822.8 914.3 827.4 909.3 833.0 907.0C838.6 904.7 845.9 900.8 851.0 900.8C856.1 900.8 860.2 907.3 863.5 907.0C866.8 906.7 869.6 905.7 871.0 899.0C872.4 892.3 871.7 877.4 872.0 866.6C872.3 855.8 872.1 844.5 872.7 834.0C873.3 823.5 875.5 814.7 875.7 803.5C875.9 792.3 874.0 778.0 874.0 766.8C874.0 755.5 875.2 747.7 875.7 736.0C876.2 724.3 876.6 709.7 877.0 696.5C877.4 683.3 877.6 667.0 878.0 656.7C878.4 646.5 878.7 643.0 879.3 635.0C879.9 627.0 880.8 619.2 881.6 609.0C882.4 598.8 883.2 585.3 884.0 574.0C884.8 562.7 885.5 552.7 886.3 541.0C887.1 529.3 888.7 512.7 888.7 503.8C888.7 494.9 887.9 493.3 886.3 487.4C884.7 481.5 881.7 474.5 879.3 468.6C876.9 462.7 874.0 456.3 872.0 452.0C870.0 447.7 869.0 445.5 867.0 443.0C865.0 440.5 883.2 438.0 860.0 437.0C836.8 436.0 751.3 435.5 728.0 437.0Z" fill="url(#mesh2)" opacity="0.8"/><path d="M728.0 437.0C704.7 438.5 722.2 442.7 720.0 446.0C717.8 449.3 716.6 452.8 715.0 457.0C713.4 461.2 712.0 466.7 710.5 471.0C709.0 475.3 707.0 478.7 705.8 482.7C704.5 486.7 703.6 489.5 703.0 495.0C702.4 500.5 702.6 510.2 702.3 515.5C702.0 520.8 701.6 519.6 701.0 527.0C700.4 534.4 699.0 548.2 698.8 560.0C698.6 571.8 698.8 585.1 700.0 597.6C701.2 610.1 704.3 625.1 705.8 635.0C707.3 644.9 708.2 646.5 709.0 656.7C709.8 667.0 710.6 683.3 710.6 696.5C710.6 709.7 708.8 723.2 709.0 736.0C709.2 748.8 711.2 759.7 712.0 773.0C712.8 786.3 713.1 802.2 713.6 815.7C714.1 829.2 714.3 842.1 715.0 854.0C715.7 865.9 716.7 879.2 718.0 887.0C719.3 894.8 719.0 899.3 722.8 900.8C726.6 902.3 734.9 895.8 741.0 896.0C747.1 896.2 753.8 900.2 759.5 902.0C765.2 903.8 770.7 908.0 775.0 907.0C779.3 906.0 783.5 902.7 785.5 896.0C787.5 889.3 786.6 876.9 787.0 866.6C787.4 856.3 787.4 846.6 787.6 834.0C787.9 821.4 788.6 803.2 788.5 791.0C788.4 778.8 787.1 769.9 787.0 760.7C786.9 751.5 787.2 741.5 787.6 736.0C788.0 730.5 788.8 728.0 789.5 728.0C790.2 728.0 791.5 725.5 791.6 736.0C791.7 746.5 790.5 774.7 790.0 791.0C789.5 807.3 788.5 821.4 788.5 834.0C788.5 846.6 789.0 855.8 790.0 866.6C791.0 877.4 792.7 892.0 794.7 899.0C796.7 906.0 798.2 905.8 802.0 908.4C805.8 911.0 812.4 914.7 817.6 914.5C822.8 914.3 827.4 909.3 833.0 907.0C838.6 904.7 845.9 900.8 851.0 900.8C856.1 900.8 860.2 907.3 863.5 907.0C866.8 906.7 869.6 905.7 871.0 899.0C872.4 892.3 871.7 877.4 872.0 866.6C872.3 855.8 872.1 844.5 872.7 834.0C873.3 823.5 875.5 814.7 875.7 803.5C875.9 792.3 874.0 778.0 874.0 766.8C874.0 755.5 875.2 747.7 875.7 736.0C876.2 724.3 876.6 709.7 877.0 696.5C877.4 683.3 877.6 667.0 878.0 656.7C878.4 646.5 878.7 643.0 879.3 635.0C879.9 627.0 880.8 619.2 881.6 609.0C882.4 598.8 883.2 585.3 884.0 574.0C884.8 562.7 885.5 552.7 886.3 541.0C887.1 529.3 888.7 512.7 888.7 503.8C888.7 494.9 887.9 493.3 886.3 487.4C884.7 481.5 881.7 474.5 879.3 468.6C876.9 462.7 874.0 456.3 872.0 452.0C870.0 447.7 869.0 445.5 867.0 443.0C865.0 440.5 883.2 438.0 860.0 437.0C836.8 436.0 751.3 435.5 728.0 437.0Z" fill="none" stroke="#3a3a40" stroke-width="1"/>
<g clip-path="url(#cpPants)" style="mix-blend-mode:screen">
<path d="M711.0 557.0C712.2 550.5 719.3 551.2 725.0 551.0C730.7 550.8 738.3 552.5 745.0 556.0C751.7 559.5 759.0 566.3 765.0 572.0C771.0 577.7 777.2 584.0 781.0 590.0C784.8 596.0 786.8 599.7 788.0 608.0C789.2 616.3 789.2 626.3 788.5 640.0C787.8 653.7 786.8 684.0 784.0 690.0C781.2 696.0 777.3 682.7 772.0 676.0C766.7 669.3 758.5 659.0 752.0 650.0C745.5 641.0 738.7 632.0 733.0 622.0C727.3 612.0 721.7 600.8 718.0 590.0C714.3 579.2 709.8 563.5 711.0 557.0Z" fill="#1c2028"/><path d="M868.0 557.0C866.3 550.7 858.7 551.8 853.0 552.0C847.3 552.2 840.8 554.0 834.0 558.0C827.2 562.0 818.0 569.7 812.0 576.0C806.0 582.3 801.3 589.8 798.0 596.0C794.7 602.2 793.1 605.7 792.0 613.0C790.9 620.3 790.8 627.2 791.5 640.0C792.2 652.8 793.2 684.7 796.0 690.0C798.8 695.3 802.8 679.0 808.0 672.0C813.2 665.0 820.3 656.7 827.0 648.0C833.7 639.3 842.0 629.7 848.0 620.0C854.0 610.3 859.7 600.5 863.0 590.0C866.3 579.5 869.7 563.3 868.0 557.0Z" fill="#1c2028"/>
<path d="M752.0 742.0C755.7 738.0 761.3 736.7 766.0 736.0C770.7 735.3 776.7 736.0 780.0 738.0C783.3 740.0 785.0 742.7 786.0 748.0C787.0 753.3 787.0 763.0 786.0 770.0C785.0 777.0 782.7 785.0 780.0 790.0C777.3 795.0 774.0 799.2 770.0 800.0C766.0 800.8 759.7 798.3 756.0 795.0C752.3 791.7 750.0 785.8 748.0 780.0C746.0 774.2 743.3 766.3 744.0 760.0C744.7 753.7 748.3 746.0 752.0 742.0Z" fill="#181c24" filter="url(#blur2)"/><path d="M793.0 745.0C794.3 740.5 796.3 739.2 800.0 738.0C803.7 736.8 810.0 737.0 815.0 738.0C820.0 739.0 826.2 740.3 830.0 744.0C833.8 747.7 837.3 754.0 838.0 760.0C838.7 766.0 836.7 774.2 834.0 780.0C831.3 785.8 826.7 791.7 822.0 795.0C817.3 798.3 810.5 800.8 806.0 800.0C801.5 799.2 797.3 795.8 795.0 790.0C792.7 784.2 792.3 772.5 792.0 765.0C791.7 757.5 791.7 749.5 793.0 745.0Z" fill="#181c24" filter="url(#blur2)"/>
</g>
</g>
<path d="M793 246V321M803.5 262V298" stroke="#1c1c20" stroke-width="1.6" fill="none"/>
<path d="M741.0 335.0C742.3 333.3 742.2 346.2 744.0 350.0C745.8 353.8 748.0 356.0 752.0 358.0C756.0 360.0 762.3 362.0 768.0 362.0C773.7 362.0 781.8 359.7 786.0 358.0C790.2 356.3 790.7 352.0 793.0 352.0C795.3 352.0 795.5 356.3 800.0 358.0C804.5 359.7 813.7 362.0 820.0 362.0C826.3 362.0 833.7 360.0 838.0 358.0C842.3 356.0 844.0 353.8 846.0 350.0C848.0 346.2 848.8 333.3 850.0 335.0C851.2 336.7 852.8 350.5 853.0 360.0C853.2 369.5 856.5 386.0 851.0 392.0C845.5 398.0 829.7 395.5 820.0 396.0C810.3 396.5 802.0 395.0 793.0 395.0C784.0 395.0 775.8 396.5 766.0 396.0C756.2 395.5 739.0 398.0 734.0 392.0C729.0 386.0 734.8 369.5 736.0 360.0C737.2 350.5 739.7 336.7 741.0 335.0Z" fill="#3a3650" fill-opacity="0.55"/>
<path d="M742 322Q735 330 731 345T730 372T733 397L741 398Q738 370 740 350T746 324Z M848 322Q855 330 858 345T858 372T853 397L846 398Q848 370 847 350T844 324Z" fill="#57516f" filter="url(#rough2)"/>
<g clip-path="url(#cpBra)" style="isolation:isolate"><rect x="738" y="314" width="116" height="52" fill="#b8bcc8"/><rect x="738" y="314" width="116" height="52" filter="url(#foilf)"/><rect x="738" y="314" width="116" height="52" filter="url(#sparkd)" opacity="0.4"/><rect x="738" y="314" width="116" height="52" fill="url(#braG)"/></g>
<path d="M751 340Q749 370 752 396L754 426M838 338Q841 368 838 396L836 426M778 360L776 394M810 360L812 394" stroke="#b4b8c8" stroke-width="2.4" fill="none" opacity="0.85"/>
<path d="M742.0 319.0C743.8 317.0 747.7 322.8 752.0 323.0C756.3 323.2 763.0 320.7 768.0 320.0C773.0 319.3 777.8 318.7 782.0 319.0C786.2 319.3 789.3 322.2 793.0 322.0C796.7 321.8 799.5 318.8 804.0 318.0C808.5 317.2 814.7 316.7 820.0 317.0C825.3 317.3 831.2 319.7 836.0 320.0C840.8 320.3 846.7 316.5 849.0 319.0C851.3 321.5 850.5 329.8 850.0 335.0C849.5 340.2 848.0 346.2 846.0 350.0C844.0 353.8 842.3 356.0 838.0 358.0C833.7 360.0 826.3 362.0 820.0 362.0C813.7 362.0 804.5 359.7 800.0 358.0C795.5 356.3 795.3 352.0 793.0 352.0C790.7 352.0 790.2 356.3 786.0 358.0C781.8 359.7 773.7 362.0 768.0 362.0C762.3 362.0 756.0 360.0 752.0 358.0C748.0 356.0 745.8 353.8 744.0 350.0C742.2 346.2 741.3 340.2 741.0 335.0C740.7 329.8 740.2 321.0 742.0 319.0Z" fill="url(#mesh2)" opacity="0.85"/>
<path d="M741.0 335.0C742.3 333.3 742.2 346.2 744.0 350.0C745.8 353.8 748.0 356.0 752.0 358.0C756.0 360.0 762.3 362.0 768.0 362.0C773.7 362.0 781.8 359.7 786.0 358.0C790.2 356.3 790.7 352.0 793.0 352.0C795.3 352.0 795.5 356.3 800.0 358.0C804.5 359.7 813.7 362.0 820.0 362.0C826.3 362.0 833.7 360.0 838.0 358.0C842.3 356.0 844.0 353.8 846.0 350.0C848.0 346.2 848.8 333.3 850.0 335.0C851.2 336.7 852.8 350.5 853.0 360.0C853.2 369.5 856.5 386.0 851.0 392.0C845.5 398.0 829.7 395.5 820.0 396.0C810.3 396.5 802.0 395.0 793.0 395.0C784.0 395.0 775.8 396.5 766.0 396.0C756.2 395.5 739.0 398.0 734.0 392.0C729.0 386.0 734.8 369.5 736.0 360.0C737.2 350.5 739.7 336.7 741.0 335.0Z" fill="url(#mesh2)"/>
<path d="M742.0 319.0C743.8 317.0 747.7 322.8 752.0 323.0C756.3 323.2 763.0 320.7 768.0 320.0C773.0 319.3 777.8 318.7 782.0 319.0C786.2 319.3 789.3 322.2 793.0 322.0C796.7 321.8 799.5 318.8 804.0 318.0C808.5 317.2 814.7 316.7 820.0 317.0C825.3 317.3 831.2 319.7 836.0 320.0C840.8 320.3 846.7 316.5 849.0 319.0C851.3 321.5 850.5 329.8 850.0 335.0C849.5 340.2 848.0 346.2 846.0 350.0C844.0 353.8 842.3 356.0 838.0 358.0C833.7 360.0 826.3 362.0 820.0 362.0C813.7 362.0 804.5 359.7 800.0 358.0C795.5 356.3 795.3 352.0 793.0 352.0C790.7 352.0 790.2 356.3 786.0 358.0C781.8 359.7 773.7 362.0 768.0 362.0C762.3 362.0 756.0 360.0 752.0 358.0C748.0 356.0 745.8 353.8 744.0 350.0C742.2 346.2 741.3 340.2 741.0 335.0C740.7 329.8 740.2 321.0 742.0 319.0Z" fill="none" stroke="#8a8ea0" stroke-width="1.6" opacity="0.9"/>
<path d="M793 320V356" stroke="#3a86a0" stroke-width="2"/>
<path d="M714 256Q722 290 743 321M870 256Q864 290 848 321" stroke="#b8bece" stroke-width="3.2" fill="none"/>
<path d="M718 255Q727 289 747 320M866 255Q860 289 845 320" stroke="#8d93a6" stroke-width="1.6" fill="none"/>
<path d="M709 262Q715 292 734 322" stroke="#2fa0b8" stroke-width="1.3" fill="none"/><path d="M712 260Q719 292 738 322" stroke="#d08a3a" stroke-width="1.2" fill="none"/>
<path d="M862 258Q856 290 843 316" stroke="#35a878" stroke-width="1.3" fill="none"/><path d="M859 262Q854 290 841 314" stroke="#b0405a" stroke-width="1.1" fill="none"/>
<path d="M744 392H774" stroke="#4a6ec0" stroke-width="1.5"/><path d="M775 384L790 395L806 384" stroke="#e2553a" stroke-width="1.7" fill="none"/><path d="M780 384L790 391" stroke="#7a5ad0" stroke-width="1.6"/><path d="M812 392H836" stroke="#c9a23a" stroke-width="1.6"/><path d="M760 322H790" stroke="#d0603a" stroke-width="1.4"/><path d="M792 322H808" stroke="#38a0b0" stroke-width="1.4"/>
<path d="M862 330L871 354L888 382.6L908 416.8L928 448L948 482.4L957.5 503" stroke="#3a9cb0" stroke-width="1.3" fill="none" stroke-linejoin="round"/>
<path d="M729.0 422.0C732.0 420.7 734.3 423.8 745.0 424.0C755.7 424.2 777.2 423.0 793.0 423.0C808.8 423.0 829.0 424.2 840.0 424.0C851.0 423.8 855.3 420.7 859.0 422.0C862.7 423.3 861.8 428.8 862.0 432.0C862.2 435.2 863.7 439.2 860.0 441.0C856.3 442.8 851.2 442.8 840.0 443.0C828.8 443.2 808.8 442.0 793.0 442.0C777.2 442.0 755.8 443.2 745.0 443.0C734.2 442.8 731.0 442.8 728.0 441.0C725.0 439.2 726.8 435.2 727.0 432.0C727.2 428.8 726.0 423.3 729.0 422.0Z" fill="#472f80" filter="url(#rough)"/>
<g clip-path="url(#cpBelt)"><rect x="726" y="420" width="138" height="24" filter="url(#sparkd)" opacity="0.55"/></g>
<path d="M729.0 422.0C732.0 420.7 734.3 423.8 745.0 424.0C755.7 424.2 777.2 423.0 793.0 423.0C808.8 423.0 829.0 424.2 840.0 424.0C851.0 423.8 855.3 420.7 859.0 422.0C862.7 423.3 861.8 428.8 862.0 432.0C862.2 435.2 863.7 439.2 860.0 441.0C856.3 442.8 851.2 442.8 840.0 443.0C828.8 443.2 808.8 442.0 793.0 442.0C777.2 442.0 755.8 443.2 745.0 443.0C734.2 442.8 731.0 442.8 728.0 441.0C725.0 439.2 726.8 435.2 727.0 432.0C727.2 428.8 726.0 423.3 729.0 422.0Z" fill="url(#mesh2)" opacity="0.6"/>
<path d="M700 487L706 485L708 492L704 501L700 497ZM702 500L699 520L701.5 521ZM886 487L880 485L879 493L883 502L887 498ZM884 500L888 538L886 539Z" fill="#777a88" stroke="#4a4c5a" stroke-width="0.7" opacity="0.8"/>
<path d="M760.0 206.0C763.0 203.7 769.5 204.0 775.0 204.0C780.5 204.0 787.0 206.0 793.0 206.0C799.0 206.0 805.5 204.0 811.0 204.0C816.5 204.0 823.0 203.7 826.0 206.0C829.0 208.3 828.8 213.7 829.0 218.0C829.2 222.3 827.0 227.8 827.0 232.0C827.0 236.2 831.0 240.5 829.0 243.0C827.0 245.5 821.0 246.5 815.0 247.0C809.0 247.5 800.3 246.0 793.0 246.0C785.7 246.0 777.0 247.5 771.0 247.0C765.0 246.5 759.0 245.5 757.0 243.0C755.0 240.5 759.0 236.2 759.0 232.0C759.0 227.8 756.8 222.3 757.0 218.0C757.2 213.7 757.0 208.3 760.0 206.0Z" fill="#1f1b38" filter="url(#rough2)"/>
<g clip-path="url(#cpNeck)"><rect x="754" y="202" width="78" height="48" filter="url(#spark)" opacity="0.35"/></g>
<path d="M760.0 206.0C763.0 203.7 769.5 204.0 775.0 204.0C780.5 204.0 787.0 206.0 793.0 206.0C799.0 206.0 805.5 204.0 811.0 204.0C816.5 204.0 823.0 203.7 826.0 206.0C829.0 208.3 828.8 213.7 829.0 218.0C829.2 222.3 827.0 227.8 827.0 232.0C827.0 236.2 831.0 240.5 829.0 243.0C827.0 245.5 821.0 246.5 815.0 247.0C809.0 247.5 800.3 246.0 793.0 246.0C785.7 246.0 777.0 247.5 771.0 247.0C765.0 246.5 759.0 245.5 757.0 243.0C755.0 240.5 759.0 236.2 759.0 232.0C759.0 227.8 756.8 222.3 757.0 218.0C757.2 213.7 757.0 208.3 760.0 206.0Z" fill="url(#mesh2)" opacity="0.5"/>
<path d="M764.0 130.0C761.3 129.3 760.7 124.5 761.0 122.0C761.3 119.5 763.5 116.8 766.0 115.0C768.5 113.2 772.5 112.0 776.0 111.0C779.5 110.0 783.0 109.3 787.0 109.0C791.0 108.7 795.8 108.5 800.0 109.0C804.2 109.5 808.5 110.7 812.0 112.0C815.5 113.3 818.8 115.0 821.0 117.0C823.2 119.0 824.7 121.7 825.0 124.0C825.3 126.3 825.5 130.7 823.0 131.0C820.5 131.3 815.0 127.0 810.0 126.0C805.0 125.0 798.5 125.0 793.0 125.0C787.5 125.0 781.8 125.2 777.0 126.0C772.2 126.8 766.7 130.7 764.0 130.0Z" fill="#55555c" fill-opacity="0.55" filter="url(#rough)"/>
<path d="M764.0 130.0C761.3 129.3 760.7 124.5 761.0 122.0C761.3 119.5 763.5 116.8 766.0 115.0C768.5 113.2 772.5 112.0 776.0 111.0C779.5 110.0 783.0 109.3 787.0 109.0C791.0 108.7 795.8 108.5 800.0 109.0C804.2 109.5 808.5 110.7 812.0 112.0C815.5 113.3 818.8 115.0 821.0 117.0C823.2 119.0 824.7 121.7 825.0 124.0C825.3 126.3 825.5 130.7 823.0 131.0C820.5 131.3 815.0 127.0 810.0 126.0C805.0 125.0 798.5 125.0 793.0 125.0C787.5 125.0 781.8 125.2 777.0 126.0C772.2 126.8 766.7 130.7 764.0 130.0Z" fill="url(#meshL)" opacity="0.9" filter="url(#rough2)"/>
<path d="M793.0 122.0C797.3 122.0 801.8 122.2 806.0 123.0C810.2 123.8 814.8 125.2 818.0 127.0C821.2 128.8 823.0 131.0 825.0 134.0C827.0 137.0 828.8 141.0 830.0 145.0C831.2 149.0 831.7 153.5 832.0 158.0C832.3 162.5 832.3 167.0 832.0 172.0C831.7 177.0 831.0 182.8 830.0 188.0C829.0 193.2 827.3 199.3 826.0 203.0C824.7 206.7 827.5 208.2 822.0 210.0C816.5 211.8 802.7 214.0 793.0 214.0C783.3 214.0 769.5 211.8 764.0 210.0C758.5 208.2 761.3 206.7 760.0 203.0C758.7 199.3 757.0 193.2 756.0 188.0C755.0 182.8 754.3 177.0 754.0 172.0C753.7 167.0 753.7 162.5 754.0 158.0C754.3 153.5 754.8 149.0 756.0 145.0C757.2 141.0 759.0 137.0 761.0 134.0C763.0 131.0 764.8 128.8 768.0 127.0C771.2 125.2 775.8 123.8 780.0 123.0C784.2 122.2 788.7 122.0 793.0 122.0Z" fill="#46417a" filter="url(#rough2)"/>
<path d="M793.0 122.0C797.3 122.0 801.8 122.2 806.0 123.0C810.2 123.8 814.8 125.2 818.0 127.0C821.2 128.8 823.0 131.0 825.0 134.0C827.0 137.0 828.8 141.0 830.0 145.0C831.2 149.0 831.7 153.5 832.0 158.0C832.3 162.5 832.3 167.0 832.0 172.0C831.7 177.0 831.0 182.8 830.0 188.0C829.0 193.2 827.3 199.3 826.0 203.0C824.7 206.7 827.5 208.2 822.0 210.0C816.5 211.8 802.7 214.0 793.0 214.0C783.3 214.0 769.5 211.8 764.0 210.0C758.5 208.2 761.3 206.7 760.0 203.0C758.7 199.3 757.0 193.2 756.0 188.0C755.0 182.8 754.3 177.0 754.0 172.0C753.7 167.0 753.7 162.5 754.0 158.0C754.3 153.5 754.8 149.0 756.0 145.0C757.2 141.0 759.0 137.0 761.0 134.0C763.0 131.0 764.8 128.8 768.0 127.0C771.2 125.2 775.8 123.8 780.0 123.0C784.2 122.2 788.7 122.0 793.0 122.0Z" fill="url(#mesh2)" opacity="0.9"/>
<g clip-path="url(#cpMask)" style="isolation:isolate"><rect x="755" y="146" width="76" height="100" fill="#c6cad6"/><rect x="755" y="146" width="76" height="100" filter="url(#foilf)"/><rect x="755" y="146" width="76" height="100" filter="url(#sparkd)" opacity="0.45"/></g>
<path d="M760.0 150.0C762.7 146.3 763.2 149.7 768.0 151.0C772.8 152.3 772.9 152.6 778.0 155.0C783.1 157.4 783.0 157.9 787.0 160.0C791.0 162.1 789.8 163.0 793.0 163.0C796.2 163.0 795.0 162.1 799.0 160.0C803.0 157.9 802.9 157.4 808.0 155.0C813.1 152.6 813.2 152.3 818.0 151.0C822.8 149.7 823.3 146.3 826.0 150.0C828.7 153.7 828.0 156.5 828.0 165.0C828.0 173.5 827.9 173.2 826.0 182.0C824.1 190.8 824.2 190.3 821.0 198.0C817.8 205.7 818.0 204.1 814.0 211.0C810.0 217.9 810.3 217.1 806.0 224.0C801.7 230.9 801.5 232.2 798.0 237.0C794.5 241.8 795.7 242.0 793.0 242.0C790.3 242.0 791.5 241.8 788.0 237.0C784.5 232.2 784.3 230.9 780.0 224.0C775.7 217.1 776.0 217.9 772.0 211.0C768.0 204.1 768.2 205.7 765.0 198.0C761.8 190.3 761.9 190.8 760.0 182.0C758.1 173.2 758.0 173.5 758.0 165.0C758.0 156.5 757.3 153.7 760.0 150.0Z" fill="url(#mesh2)" opacity="0.6"/>
<path d="M760.0 150.0C762.7 146.3 763.2 149.7 768.0 151.0C772.8 152.3 772.9 152.6 778.0 155.0C783.1 157.4 783.0 157.9 787.0 160.0C791.0 162.1 789.8 163.0 793.0 163.0C796.2 163.0 795.0 162.1 799.0 160.0C803.0 157.9 802.9 157.4 808.0 155.0C813.1 152.6 813.2 152.3 818.0 151.0C822.8 149.7 823.3 146.3 826.0 150.0C828.7 153.7 828.0 156.5 828.0 165.0C828.0 173.5 827.9 173.2 826.0 182.0C824.1 190.8 824.2 190.3 821.0 198.0C817.8 205.7 818.0 204.1 814.0 211.0C810.0 217.9 810.3 217.1 806.0 224.0C801.7 230.9 801.5 232.2 798.0 237.0C794.5 241.8 795.7 242.0 793.0 242.0C790.3 242.0 791.5 241.8 788.0 237.0C784.5 232.2 784.3 230.9 780.0 224.0C775.7 217.1 776.0 217.9 772.0 211.0C768.0 204.1 768.2 205.7 765.0 198.0C761.8 190.3 761.9 190.8 760.0 182.0C758.1 173.2 758.0 173.5 758.0 165.0C758.0 156.5 757.3 153.7 760.0 150.0Z" fill="none" stroke="#d4d8e4" stroke-width="1.1" opacity="0.75"/>
<path d="M793 163V240" stroke="#d8dce8" stroke-width="1.2" opacity="0.8"/>
</svg></div><div id="vpr" class="a"></div>
<svg class="a" style="left:37px;top:0;filter:blur(0.3px)" width="1573" height="80" viewBox="37 0 1573 80">
<defs>
<linearGradient id="gC" x1="0" y1="0" x2="0" y2="1"><stop offset="0" stop-color="#d0d0d0"/><stop offset="1" stop-color="#6a6a6a"/></linearGradient>
<linearGradient id="gL" x1="0" y1="0" x2="0" y2="1"><stop offset="0" stop-color="#d8d8d8"/><stop offset="1" stop-color="#808080"/></linearGradient>
<linearGradient id="gA" x1="0" y1="0" x2="0" y2="1"><stop offset="0" stop-color="#7a7a7a"/><stop offset="1" stop-color="#f4f4f4"/></linearGradient>
<linearGradient id="gD" x1="0" y1="0" x2="0" y2="1"><stop offset="0" stop-color="#707070"/><stop offset="1" stop-color="#484848"/></linearGradient>
<linearGradient id="gF" x1="0" y1="0" x2="0" y2="1"><stop offset="0" stop-color="#7c7c7c"/><stop offset="1" stop-color="#7c7c7c" stop-opacity="0.05"/></linearGradient>
<linearGradient id="gT" x1="0" y1="0" x2="0" y2="1"><stop offset="0" stop-color="#404040"/><stop offset="1" stop-color="#6c6c6c"/></linearGradient>
<linearGradient id="gR" x1="0" y1="0" x2="1" y2="0"><stop offset="0" stop-color="#888"/><stop offset="0.5" stop-color="#f0f0f0"/><stop offset="1" stop-color="#999"/></linearGradient>
<radialGradient id="gB" cx="0.4" cy="0.35" r="0.7"><stop offset="0" stop-color="#fff"/><stop offset="1" stop-color="#9a9a9a"/></radialGradient>
<radialGradient id="gBtn" cx="0.5" cy="0.4" r="0.7"><stop offset="0" stop-color="#c4c4c4"/><stop offset="1" stop-color="#9a9a9a"/></radialGradient>
</defs>
<path d="M1594.5 2.5H1599M1594.5 2.5V7.5H1600.5V5.5" stroke="#8a8a8a" stroke-width="1" fill="none"/><path d="M1597.5 5L1601.5 1M1599 0.8H1601.8V3.5" stroke="#8a8a8a" stroke-width="1" fill="none"/>
<rect x="38" y="17" width="1" height="24" fill="#1a1a1b"/><rect x="39" y="17" width="1" height="24" fill="#303031"/><rect x="40" y="17" width="1" height="24" fill="#1c1c1d"/>
<rect x="87" y="17" width="1" height="24" fill="#1a1a1b"/><rect x="88" y="17" width="1" height="24" fill="#303031"/><rect x="89" y="17" width="1" height="24" fill="#1c1c1d"/>
<rect x="174" y="17" width="1" height="24" fill="#1a1a1b"/><rect x="175" y="17" width="1" height="24" fill="#303031"/><rect x="176" y="17" width="1" height="24" fill="#1c1c1d"/>
<rect x="297" y="17" width="1" height="24" fill="#1a1a1b"/><rect x="298" y="17" width="1" height="24" fill="#303031"/><rect x="299" y="17" width="1" height="24" fill="#1c1c1d"/>
<rect x="385" y="17" width="1" height="24" fill="#1a1a1b"/><rect x="386" y="17" width="1" height="24" fill="#303031"/><rect x="387" y="17" width="1" height="24" fill="#1c1c1d"/>
<rect x="472" y="17" width="1" height="24" fill="#1a1a1b"/><rect x="473" y="17" width="1" height="24" fill="#303031"/><rect x="474" y="17" width="1" height="24" fill="#1c1c1d"/>
<rect x="670" y="17" width="1" height="24" fill="#1a1a1b"/><rect x="671" y="17" width="1" height="24" fill="#303031"/><rect x="672" y="17" width="1" height="24" fill="#1c1c1d"/>
<rect x="756" y="17" width="1" height="24" fill="#1a1a1b"/><rect x="757" y="17" width="1" height="24" fill="#303031"/><rect x="758" y="17" width="1" height="24" fill="#1c1c1d"/>
<rect x="844" y="17" width="1" height="24" fill="#1a1a1b"/><rect x="845" y="17" width="1" height="24" fill="#303031"/><rect x="846" y="17" width="1" height="24" fill="#1c1c1d"/>
<rect x="38" y="48" width="1" height="25" fill="#1a1a1b"/><rect x="39" y="48" width="1" height="25" fill="#303031"/><rect x="40" y="48" width="1" height="25" fill="#1c1c1d"/>
<rect x="87" y="48" width="1" height="25" fill="#1a1a1b"/><rect x="88" y="48" width="1" height="25" fill="#303031"/><rect x="89" y="48" width="1" height="25" fill="#1c1c1d"/>
<rect x="174" y="48" width="1" height="25" fill="#1a1a1b"/><rect x="175" y="48" width="1" height="25" fill="#303031"/><rect x="176" y="48" width="1" height="25" fill="#1c1c1d"/>
<rect x="260" y="48" width="1" height="25" fill="#1a1a1b"/><rect x="261" y="48" width="1" height="25" fill="#303031"/><rect x="262" y="48" width="1" height="25" fill="#1c1c1d"/>
<rect x="385" y="48" width="1" height="25" fill="#1a1a1b"/><rect x="386" y="48" width="1" height="25" fill="#303031"/><rect x="387" y="48" width="1" height="25" fill="#1c1c1d"/>
<rect x="508" y="48" width="1" height="25" fill="#1a1a1b"/><rect x="509" y="48" width="1" height="25" fill="#303031"/><rect x="510" y="48" width="1" height="25" fill="#1c1c1d"/>
<rect x="559" y="48" width="1" height="25" fill="#1a1a1b"/><rect x="560" y="48" width="1" height="25" fill="#303031"/><rect x="561" y="48" width="1" height="25" fill="#1c1c1d"/>
<rect x="645" y="48" width="1" height="25" fill="#1a1a1b"/><rect x="646" y="48" width="1" height="25" fill="#303031"/><rect x="647" y="48" width="1" height="25" fill="#1c1c1d"/>
<path d="M59 22H65.8V29H71.6L62.4 39.6L53.2 29H59Z" fill="url(#gA)"/><path d="M75 36.2L75 41L70.2 41Z" fill="#6b6b6b"/>
<rect x="96.5" y="17.5" width="31" height="26" fill="#1c1c21" stroke="#322f27" stroke-width="1"/>
<path transform="translate(99 19.4) scale(1.0)" d="M0 0L0 9.3L2.3 7.1L6.8 6.4Z" fill="url(#gC)"/>
<path d="M115.6 26V39.4M108.8 32.7H122.4" stroke="#e89a1c" stroke-width="1.5"/><path d="M115.6 25L117.6 28H113.6ZM115.6 40.4L117.6 37.4H113.6ZM107.8 32.7L110.8 30.7V34.7ZM123.4 32.7L120.4 30.7V34.7Z" fill="#e89a1c"/><path d="M115.6 27V38.4M110 32.7H121.2" stroke="#ffe9b0" stroke-width="0.7"/>
<path transform="translate(136 19.4) scale(1.0)" d="M0 0L0 9.3L2.3 7.1L6.8 6.4Z" fill="url(#gC)"/>
<circle cx="148.4" cy="29.6" r="3.9" fill="none" stroke="#ddd" stroke-width="1.4" stroke-dasharray="1.4 1.3"/>
<path d="M158.2 22.6L160.4 24.6L150.2 35.6L146.2 37.6L147.8 33.6Z" fill="url(#gL)"/><path d="M162 36.2L162 41L157.2 41Z" fill="#6b6b6b"/>
<path transform="translate(186.2 19.4) scale(1.0)" d="M0 0L0 9.3L2.3 7.1L6.8 6.4Z" fill="url(#gC)"/><path opacity="1" d="M196.5 24.74L203.25 24.74L203.25 23.5L205.2 23.5L205.2 24.74L207.75 24.74L210 26.6L210 39.0L195 39.0L195 36.52L204.0 36.52L204.0 30.48L199.8 30.48L199.8 34.66L198.0 34.66L198.0 30.48L196.5 30.48Z" fill="#a8a8a8"/>
<rect x="229" y="20.5" width="14.5" height="13" fill="url(#gF)"/><rect x="234.5" y="24" width="3" height="10" fill="#252526" opacity="0.6"/><rect x="236.6" y="18" width="1.2" height="6" fill="#666"/>
<path d="M225.4 37H237.5" stroke="#ddd" stroke-width="1.1"/><circle cx="225.4" cy="37" r="1.7" fill="#eee"/><circle cx="237.5" cy="37" r="1.7" fill="#eee"/><path d="M249 35.5L249 41L243.5 41Z" fill="#6b6b6b"/>
<rect x="266.7" y="20.5" width="13.5" height="13" fill="url(#gF)"/><rect x="272" y="24" width="3" height="10" fill="#252526" opacity="0.6"/><rect x="273.8" y="18" width="1.2" height="6" fill="#666"/>
<path d="M260.8 38.5Q265 33.5 269 36.6T277.8 37.6" stroke="#999" stroke-width="1.8" fill="none"/><circle cx="269" cy="36.6" r="1.7" fill="#eee"/><path d="M286 36.2L286 41L281.2 41Z" fill="#6b6b6b"/>
<path transform="translate(310 19.4) scale(1.0)" d="M0 0L0 9.3L2.3 7.1L6.8 6.4Z" fill="url(#gC)"/><path d="M317.2 38.6L329 24.6" stroke="#d8d8d8" stroke-width="1.2"/><circle cx="330.3" cy="22.4" r="2.6" fill="url(#gB)"/>
<path d="M348.6 30.4Q348.6 24 355.6 22L365 20.2Q373 19.6 373 27V38.6H363.6V33Q363.6 30.6 361 31.6L356.4 34.6Q349 37 348.6 30.4Z" fill="#4a4a4a"/><path d="M356 22.4L365 20.6Q370 20.4 371.6 23" stroke="#6a6a6a" stroke-width="1" fill="none"/><ellipse cx="352.6" cy="30.6" rx="2.6" ry="3.2" fill="#262626" stroke="#686868" stroke-width="1"/>
<path d="M352 20.8L368 31.5" stroke="#c8c8c8" stroke-width="1"/><circle cx="369.2" cy="32" r="2.6" fill="url(#gB)"/><path d="M374 36.2L374 41L369.2 41Z" fill="#6b6b6b"/>
<path transform="translate(397 19.4) scale(1.0)" d="M0 0L0 9.3L2.3 7.1L6.8 6.4Z" fill="url(#gC)"/>
<path d="M407.5 28.5Q412 31 418 29.5L415.5 38.5Q411 40 405.5 36Z" fill="#1e1e1e" stroke="#8a8a8a" stroke-width="0.9"/>
<path d="M410.4 25L407 32M420.4 31L416.5 38" stroke="#ccc" stroke-width="1"/><circle cx="410.4" cy="24.8" r="2.4" fill="url(#gB)"/><circle cx="420.6" cy="31" r="2.4" fill="url(#gB)"/>
<path d="M436 27.5Q444 25 450 27T460.5 26.5L458.5 36.5Q452 39 446 36.5T434.5 35Z" fill="#3d3d3d" stroke="#8a8a8a" stroke-width="0.9"/>
<path d="M438.8 25L435 33.5M457.5 31L453.5 39.5" stroke="#ccc" stroke-width="1"/><circle cx="438.9" cy="24.4" r="2.5" fill="url(#gB)"/><circle cx="457.6" cy="31" r="2.5" fill="url(#gB)"/><path d="M461.5 36.7L461.5 41.5L456.7 41.5Z" fill="#6b6b6b"/>
<path d="M494 20.5V35L486.5 39.5H500L503.5 35H494M486.5 39.5V32L494 27" stroke="#5c5c5c" stroke-width="1.1" fill="none"/>
<path d="M490 26.4Q499 25.5 500.5 31L503.5 30L501 36L495.5 33L498.4 32Q497 28.5 490 28.6Z" fill="#e4e4e4"/>
<path d="M529.92 21Q534.0 23.88 538.08 21L541.2 21.9L546 27.48L542.64 29.64L540.72 28.2L540.72 39L527.28 39L527.28 28.2L525.36 29.64L522 27.48L526.8 21.9Z" fill="url(#gL)"/><path d="M533.9 20V40M521 30.3H547" stroke="#252526" stroke-width="1.4"/>
<rect x="570" y="19.5" width="2.4" height="20" fill="#555"/><path d="M563 25Q566 24 569.6 26.5V39.5Q566 40 563.5 37Z" fill="url(#gL)"/><path d="M579.4 25Q576.4 24 572.8 26.5V39.5Q576.4 40 578.9 37Z" fill="url(#gL)"/><path d="M563 25L569.6 26.5L569.6 24.5L565.5 23ZM579.4 25L572.8 26.5L572.8 24.5L577 23Z" fill="#333"/>
<circle cx="608" cy="21.2" r="2.1" fill="#6a6a6a"/><rect x="607" y="22.5" width="2" height="3" fill="#666"/><path d="M603.5 25.5H612.5L616 29.5L614.6 30.8L612.8 29.5V36.8H603.2V29.5L601.4 30.8L600 29.5Z" fill="#a2a2a2"/><rect x="604.2" y="36.8" width="3" height="4.6" fill="#7a7a7a"/><rect x="608.8" y="36.8" width="3" height="4.6" fill="#7a7a7a"/>
<circle cx="644.6" cy="20.6" r="2.2" fill="#6a6a6a"/><path d="M641 25H648.2L652.6 29.6L651.4 31L648.6 28.8V37H647.8V41H645.4V37H643.8V41H641.4V37H640.6V28.8L637.8 31L636.6 29.6Z" fill="#777"/>
<path d="M640.6 27.4H648.6M640.8 31H648.4M641 34.4H648.2M641.4 37.6H647.8M637.4 29.4L639.4 31.2M651.8 29.4L649.8 31.2" stroke="#e0e0e0" stroke-width="1"/>
<path transform="translate(682 19.4) scale(1.25)" d="M0 0L0 9.3L2.3 7.1L6.8 6.4Z" fill="url(#gC)"/>
<path d="M689.6 26.2Q693 31.4 698 34T707.4 37.4L705 41.2Q698 40 693 36.6T686.6 29.4Z" fill="url(#gL)"/><path d="M691.4 31L693.8 28.8M693.4 33.4L695.8 31.2M695.8 35.4L697.8 33M698.4 37L700 34.4M701.2 38.2L702.4 35.4" stroke="#333" stroke-width="0.8"/><path d="M692.6 25.4Q695 21.4 699.4 20L698.4 23.6Q695.6 24.4 694 26.6Z" fill="#8a8a8a"/><path d="M709 37L709 42L704 42Z" fill="#6b6b6b"/>
<path d="M721 36.5L735.6 20.5L739.8 22.8L725 39.4Z" fill="url(#gL)"/><path d="M723.6 35.4L726.4 37.8M725.6 33.2L728.4 35.6M727.6 31L730.4 33.4M729.6 28.8L732.4 31.2M731.6 26.6L734.4 29M733.6 24.4L736.4 26.8" stroke="#444" stroke-width="0.7"/><path d="M739.8 22.8Q743.5 25 742.6 29.6L739.2 31L737.6 28Q740 27 738.4 24.6Z" fill="#777"/><path d="M746 37L746 42L741 42Z" fill="#6b6b6b"/>
<path transform="translate(769 20.2) scale(1.0)" d="M0 0L0 9.3L2.3 7.1L6.8 6.4Z" fill="url(#gC)"/><path d="M781.4 24.8Q784.7 27.23 788.0 24.8L790.52 25.56L794.4 30.27L791.68 32.1L790.13 30.88L790.13 40.0L779.27 40.0L779.27 30.88L777.72 32.1L775.0 30.27L778.88 25.56Z" fill="#585858"/><rect x="783" y="27.5" width="3.4" height="12.5" fill="#d0d0d0"/><path d="M783 29.6H786.4M783 31.6H786.4M783 33.6H786.4M783 35.6H786.4M783 37.6H786.4" stroke="#666" stroke-width="0.6"/>
<path d="M814.75 20Q819.0 23.2 823.25 20L826.5 21.0L831.5 27.2L828.0 29.6L826.0 28.0L826.0 40L812.0 40L812.0 28.0L810.0 29.6L806.5 27.2L811.5 21.0Z" fill="#5a5a5a"/><rect x="816.8" y="24" width="4.4" height="16" fill="#d0d0d0"/><path d="M816.8 26.4H821.2M816.8 28.6H821.2M816.8 30.8H821.2M816.8 33H821.2M816.8 35.2H821.2M816.8 37.4H821.2" stroke="#666" stroke-width="0.6"/><path d="M833 37.2L833 42L828.2 42Z" fill="#6b6b6b"/>
<path transform="translate(856.2 19.4) scale(1.0)" d="M0 0L0 9.3L2.3 7.1L6.8 6.4Z" fill="url(#gC)"/>
<path d="M868 27L881.2 27L878 38.2L864.6 38.2Z" fill="#333"/><path d="M868.0 27.0L864.6 38.2M868.0 27.0L881.2 27.0M874.6 27.0L871.3 38.2M866.3 32.6L879.6 32.6M881.2 27.0L878.0 38.2M864.6 38.2L878.0 38.2" stroke="#a4a4a4" stroke-width="0.9" fill="none"/><circle cx="868.0" cy="27.0" r="1.0" fill="#d8d8d8"/><circle cx="866.3" cy="32.6" r="1.0" fill="#d8d8d8"/><circle cx="864.6" cy="38.2" r="1.0" fill="#d8d8d8"/><circle cx="874.6" cy="27.0" r="1.0" fill="#d8d8d8"/><circle cx="872.9" cy="32.6" r="1.0" fill="#d8d8d8"/><circle cx="871.2" cy="38.2" r="1.0" fill="#d8d8d8"/><circle cx="881.2" cy="27.0" r="1.0" fill="#d8d8d8"/><circle cx="879.5" cy="32.6" r="1.0" fill="#d8d8d8"/><circle cx="877.8" cy="38.2" r="1.0" fill="#d8d8d8"/>
<path d="M898.4 21.5L918.4 21.5L913.4 38.2L893.8 38.2Z" fill="#363636"/><path d="M898.4 21.5L893.8 38.2M898.4 21.5L918.4 21.5M908.4 21.5L903.6 38.2M896.1 29.9L915.9 29.9M918.4 21.5L913.4 38.2M893.8 38.2L913.4 38.2" stroke="#a4a4a4" stroke-width="0.9" fill="none"/><circle cx="898.4" cy="21.5" r="1.0" fill="#d8d8d8"/><circle cx="896.1" cy="29.9" r="1.0" fill="#d8d8d8"/><circle cx="893.8" cy="38.2" r="1.0" fill="#d8d8d8"/><circle cx="908.4" cy="21.5" r="1.0" fill="#d8d8d8"/><circle cx="906.1" cy="29.9" r="1.0" fill="#d8d8d8"/><circle cx="903.8" cy="38.2" r="1.0" fill="#d8d8d8"/><circle cx="918.4" cy="21.5" r="1.0" fill="#d8d8d8"/><circle cx="916.1" cy="29.9" r="1.0" fill="#d8d8d8"/><circle cx="913.8" cy="38.2" r="1.0" fill="#d8d8d8"/>
<path d="M49 52L54 55.3L49 58.6Z" fill="#e0e0e0"/>
<circle cx="67" cy="53.2" r="2.6" fill="#8c8c8c"/><path d="M63.5 57Q66 55.6 68.4 57L70 60.5L73.6 60.8V62.4L69 62.4L68 60.6L67.6 64L69.2 71.6H66.6L65.4 66L62 71.6H59.2L63 64.4L63.4 59.4L62 61L61.4 64H59.8L60.4 60Z" fill="#8c8c8c"/>
<path transform="translate(99 52) scale(1.0)" d="M0 0L0 9.3L2.3 7.1L6.8 6.4Z" fill="url(#gC)"/><path d="M111.08 57.6Q113.9 59.84 116.72 57.6L118.88 58.3L122.2 62.64L119.88 64.32L118.55 63.2L118.55 71.6L109.25 71.6L109.25 63.2L107.92 64.32L105.6 62.64L108.92 58.3Z" fill="#585858"/>
<path d="M107.8 61Q112 61 113.5 65.5T118.7 70.2" stroke="#e8e8e8" stroke-width="0.9" fill="none"/><circle cx="107.8" cy="61" r="1.5" fill="#eee"/><circle cx="118.7" cy="70.2" r="1.5" fill="#eee"/>
<path d="M143.6 54.5Q147.0 57.25 150.4 54.5L153.0 55.36L157 60.69L154.2 62.76L152.6 61.38L152.6 71.7L141.4 71.7L141.4 61.38L139.8 62.76L137 60.69L141.0 55.36Z" fill="#585858"/>
<path d="M139 57.3Q145 58 147 64T154.2 70.2" stroke="#e8e8e8" stroke-width="0.9" fill="none"/><circle cx="139" cy="57.3" r="1.5" fill="#eee"/><circle cx="154.2" cy="70.2" r="1.5" fill="#eee"/>
<path d="M156.8 53.4L160.6 55.6L159.6 57.4L155.8 55.2ZM155.4 55.8L159.2 58L155.6 62.4L151.6 63.4L152.6 59.4Z" fill="#dcdcdc"/><path d="M151.6 63.4L155.2 59.4" stroke="#333" stroke-width="0.7"/>
<path transform="translate(186.2 52) scale(1.0)" d="M0 0L0 9.3L2.3 7.1L6.8 6.4Z" fill="url(#gC)"/><path d="M200.4 55.09L202.32 54.4Q204.4 56.81 206.48 54.4L208.72 55.43Q208.4 59.56 208.4 62.66Q210.0 68.16 211.6 71.6L195.6 71.6Q198.16 66.44 199.76 62.66Q200.4 59.56 200.4 55.09Z" fill="#5c5c5c"/>
<path d="M196 57Q201 58 202.4 63.5T209.6 69.8" stroke="#e8e8e8" stroke-width="0.9" fill="none"/><circle cx="196" cy="57" r="1.5" fill="#eee"/><circle cx="209.6" cy="69.8" r="1.5" fill="#eee"/>
<path d="M232.9 53.55L235.06 52.8Q237.4 55.43 239.74 52.8L242.26 53.93Q241.9 58.44 241.9 61.82Q243.7 67.84 245.5 71.6L227.5 71.6Q230.38 65.96 232.18 61.82Q232.9 58.44 232.9 53.55Z" fill="#5c5c5c"/>
<path d="M227.6 54.8Q234 56 236 62T243.8 69" stroke="#e8e8e8" stroke-width="0.9" fill="none"/><circle cx="227.6" cy="54.8" r="1.5" fill="#eee"/><circle cx="243.8" cy="69" r="1.5" fill="#eee"/>
<path d="M247.6 50.6L250 52.6L242 61L239.4 62L240 59.2Z" fill="url(#gL)"/><path d="M250 68.5L250 73.5L245 73.5Z" fill="#6b6b6b"/>
<path transform="translate(273.3 52) scale(1.0)" d="M0 0L0 9.3L2.3 7.1L6.8 6.4Z" fill="url(#gC)"/>
<rect x="282.60" y="58.40" width="2.80" height="2.80" fill="#cfcfcf"/><rect x="282.60" y="61.20" width="2.80" height="2.80" fill="#303030"/><rect x="282.60" y="64.00" width="2.80" height="2.80" fill="#cfcfcf"/><rect x="282.60" y="66.80" width="2.80" height="2.80" fill="#303030"/><rect x="285.40" y="58.40" width="2.80" height="2.80" fill="#303030"/><rect x="285.40" y="61.20" width="2.80" height="2.80" fill="#cfcfcf"/><rect x="285.40" y="64.00" width="2.80" height="2.80" fill="#303030"/><rect x="285.40" y="66.80" width="2.80" height="2.80" fill="#cfcfcf"/><rect x="288.20" y="58.40" width="2.80" height="2.80" fill="#cfcfcf"/><rect x="288.20" y="61.20" width="2.80" height="2.80" fill="#303030"/><rect x="288.20" y="64.00" width="2.80" height="2.80" fill="#cfcfcf"/><rect x="288.20" y="66.80" width="2.80" height="2.80" fill="#303030"/>
<path d="M291.4 56Q294 54.6 297.4 55.4V68.4Q296 71.8 290 71.6Q285 71.4 283.4 69.8Q288 70.4 290.4 68.6Q291.6 67 291.4 56Z" fill="url(#gR)"/>
<path transform="translate(310 52) scale(1.0)" d="M0 0L0 9.3L2.3 7.1L6.8 6.4Z" fill="url(#gC)"/><path d="M323.18 57.6Q326.1 59.84 329.02 57.6L331.26 58.3L334.7 62.64L332.29 64.32L330.92 63.2L330.92 71.6L321.28 71.6L321.28 63.2L319.91 64.32L317.5 62.64L320.94 58.3Z" fill="#747474"/><rect x="322.40" y="62.60" width="2.53" height="2.20" fill="#cfcfcf"/><rect x="322.40" y="64.80" width="2.53" height="2.20" fill="#303030"/><rect x="322.40" y="67.00" width="2.53" height="2.20" fill="#cfcfcf"/><rect x="324.93" y="62.60" width="2.53" height="2.20" fill="#303030"/><rect x="324.93" y="64.80" width="2.53" height="2.20" fill="#cfcfcf"/><rect x="324.93" y="67.00" width="2.53" height="2.20" fill="#303030"/><rect x="327.47" y="62.60" width="2.53" height="2.20" fill="#cfcfcf"/><rect x="327.47" y="64.80" width="2.53" height="2.20" fill="#303030"/><rect x="327.47" y="67.00" width="2.53" height="2.20" fill="#cfcfcf"/>
<path d="M355.49 52.8Q359.6 55.87 363.71 52.8L366.86 53.76L371.7 59.71L368.31 62.02L366.38 60.48L366.38 72.0L352.82 72.0L352.82 60.48L350.89 62.02L347.5 59.71L352.34 53.76Z" fill="#747474"/><rect x="354.00" y="59.40" width="4.00" height="4.00" fill="#cfcfcf"/><rect x="354.00" y="63.40" width="4.00" height="4.00" fill="#303030"/><rect x="354.00" y="67.40" width="4.00" height="4.00" fill="#cfcfcf"/><rect x="358.00" y="59.40" width="4.00" height="4.00" fill="#303030"/><rect x="358.00" y="63.40" width="4.00" height="4.00" fill="#cfcfcf"/><rect x="358.00" y="67.40" width="4.00" height="4.00" fill="#303030"/><rect x="362.00" y="59.40" width="4.00" height="4.00" fill="#cfcfcf"/><rect x="362.00" y="63.40" width="4.00" height="4.00" fill="#303030"/><rect x="362.00" y="67.40" width="4.00" height="4.00" fill="#cfcfcf"/>
<path transform="translate(397 52) scale(1.0)" d="M0 0L0 9.3L2.3 7.1L6.8 6.4Z" fill="url(#gC)"/><path d="M402 62.4Q404 60 406.5 62.6M402 62.4L403.6 62.6M421 61.6L423 63L421.4 64" stroke="#4a4a4a" stroke-width="1" fill="none"/><circle cx="413.8" cy="62.7" r="5.9" fill="url(#gBtn)"/><rect x="411.03" y="59.93" width="1.65" height="1.65" fill="#777"/><rect x="411.03" y="63.82" width="1.65" height="1.65" fill="#777"/><rect x="414.92" y="59.93" width="1.65" height="1.65" fill="#777"/><rect x="414.92" y="63.82" width="1.65" height="1.65" fill="#777"/>
<circle cx="447" cy="62.2" r="8.4" fill="url(#gBtn)"/><rect x="443.05" y="58.25" width="2.35" height="2.35" fill="#777"/><rect x="443.05" y="63.80" width="2.35" height="2.35" fill="#777"/><rect x="448.60" y="58.25" width="2.35" height="2.35" fill="#777"/><rect x="448.60" y="63.80" width="2.35" height="2.35" fill="#777"/><path d="M460.5 69.4L460.5 74L455.9 74Z" fill="#6b6b6b"/>
<rect x="472" y="55.8" width="8" height="7" rx="0.6" fill="#666"/><path d="M473.8 55.8V53.6Q476 50.4 478.2 53.6V55.8" stroke="#666" stroke-width="1.3" fill="none"/>
<path d="M489 54.6Q494.5 51 495.2 58V66Q494.5 73 489 69.6" stroke="#555" stroke-width="1.4" fill="none"/><circle cx="488.2" cy="62" r="5.6" fill="url(#gBtn)"/><rect x="485.57" y="59.37" width="1.57" height="1.57" fill="#777"/><rect x="485.57" y="63.06" width="1.57" height="1.57" fill="#777"/><rect x="489.26" y="59.37" width="1.57" height="1.57" fill="#777"/><rect x="489.26" y="63.06" width="1.57" height="1.57" fill="#777"/>
<rect x="523.8" y="55.8" width="20" height="16.4" fill="url(#gT)"/><rect x="532.4" y="55.8" width="2.8" height="16.4" fill="#333"/>
<path d="M531 61.8H535M532.6 64H536.6M531 66.2H535M532.6 68.4H536.6M531 70.6H535" stroke="#e8e8e8" stroke-width="1.1"/><circle cx="533.8" cy="53.6" r="2" fill="none" stroke="#ccc" stroke-width="1.3"/><rect x="532.6" y="55.4" width="2.4" height="5.4" fill="#bbb"/>
<path transform="translate(571.2 52) scale(1.0)" d="M0 0L0 9.3L2.3 7.1L6.8 6.4Z" fill="url(#gC)"/><path d="M584.4 56.4L595.6 55.6L595.8 65.4L583.6 63.6Z" fill="url(#gD)"/><path d="M583.2 63.6L595.8 65.6V68.4L583 66.2Z" fill="#e4e4e4"/>
<path d="M614 56.4L630.6 54.2L630.8 67L612.4 64.6Z" fill="url(#gD)"/><path d="M612 64.6L631 67.2V70.2L611.8 67.4Z" fill="#e4e4e4"/>
<path d="M668 53.5Q668 52 669.2 52T670.2 53.5V60.4H671.8V53.5Q671.8 52 673 52T674.2 53.5V70Q674.2 71.6 671 71.6T668 70Z" fill="#5c5c5c"/>
<path d="M659 62H663.4M662.2 59.6L665.6 62L662.2 64.4Z" stroke="#e4e4e4" stroke-width="1.2" fill="#e4e4e4"/><path d="M683 62H678.6M679.8 59.6L676.4 62L679.8 64.4Z" stroke="#e4e4e4" stroke-width="1.2" fill="#e4e4e4"/>
</svg>
<div class="vt" style="top:22px;left:24px">LIBRARY</div>
<div class="vt" style="top:103px;left:24px">HISTORY</div>
<div class="vt" style="top:200px;left:24px">MODULAR CONFIGURATOR</div>
<div class="vb" style="top:90px"></div>
<div class="vb" style="top:128.6px"></div>
<div class="vb" style="top:157.6px"></div>
<div class="vb" style="top:186.7px"></div>
<div class="vb dk" style="top:215.6px"></div>
<div class="vb" style="top:244.7px"></div>
<div class="vb dk" style="top:273.6px"></div>
<div class="vb" style="top:302.6px"></div>
<svg class="a" style="left:37px;top:80px" width="60" height="260" viewBox="37 80 60 260">
<defs>
<linearGradient id="sW" x1="0" y1="0" x2="0" y2="1"><stop offset="0" stop-color="#fff"/><stop offset="1" stop-color="#c4c4c4"/></linearGradient>
<linearGradient id="sM" x1="0" y1="0" x2="1" y2="0"><stop offset="0" stop-color="#444"/><stop offset="0.55" stop-color="#d0d0d0"/><stop offset="1" stop-color="#666"/></linearGradient>
<radialGradient id="sO" cx="0.45" cy="0.4" r="0.6"><stop offset="0" stop-color="#ffd36a"/><stop offset="0.7" stop-color="#f5a030"/><stop offset="1" stop-color="#f5a030" stop-opacity="0.2"/></radialGradient>
<radialGradient id="sY" cx="0.45" cy="0.4" r="0.6"><stop offset="0" stop-color="#ffd84a"/><stop offset="1" stop-color="#f0a428"/></radialGradient>
<radialGradient id="sH" cx="0.45" cy="0.35" r="0.7"><stop offset="0" stop-color="#f4f4f4"/><stop offset="1" stop-color="#b8b8b8"/></radialGradient>
</defs>
<path d="M56 97L63 94L69 96.6V106L62 109.4L56 106.6Z" fill="#cfcfcf"/><path d="M56 97L63 94L69 96.6L62 99.8Z" fill="#e6e6e6"/><path d="M62 99.8L69 96.6V106L62 109.4Z" fill="#a4a4a4"/>
<path d="M49.5 107.5L58 105V112.6L49.5 114Z" fill="#555"/><path d="M51 107.4L53 106.8L52 110L50 110.6ZM55 106.2L57 105.6L56 108.8L54 109.4Z" fill="#e8e8e8"/><path d="M60.5 110.6L69 106.4L72 108.4L64 112.6Z" fill="#4a4a4a"/>
<path d="M55.6 134L58 132.6Q61 134.6 64 132.6L66.6 134L70.6 138.6L68.2 141L66.8 139.8V150H55.4V139.8L54 141L51.4 138.6Z" fill="url(#sW)"/><path d="M49 149.4Q53.5 144.20000000000002 59 148.8Q54 153.0 49 149.4Z" fill="#1a1a1a"/><path d="M48.4 148.0Q53.5 142.20000000000002 59.8 147.6" stroke="#1a1a1a" stroke-width="1.1" fill="none"/><circle cx="54" cy="148.70000000000002" r="1.1" fill="#999"/>
<circle cx="59.5" cy="163.6" r="1.9" fill="url(#sY)"/>
<circle cx="64.6" cy="164.4" r="2.3" fill="url(#sY)"/>
<circle cx="67" cy="168.8" r="2.7" fill="url(#sY)"/>
<circle cx="53.8" cy="167.4" r="1.8" fill="url(#sY)"/>
<circle cx="52.6" cy="172" r="2.1" fill="url(#sY)"/>
<circle cx="55.4" cy="175.6" r="2.3" fill="url(#sY)"/>
<circle cx="60.4" cy="176.6" r="3.1" fill="url(#sY)"/>
<circle cx="52" cy="178.6" r="2" fill="#e8c63a" stroke="#8a7a1a" stroke-width="1"/>
<ellipse cx="60.6" cy="194.4" rx="3.6" ry="4.4" fill="url(#sH)"/><path d="M58.8 198H62.6V201Q67 202 68.4 205.4L69 210H53.4L54 205.4Q55 202 58.8 201Z" fill="url(#sW)"/><path d="M49 208.4Q53.5 203.20000000000002 59 207.8Q54 212.0 49 208.4Z" fill="#1a1a1a"/><path d="M48.4 207.0Q53.5 201.20000000000002 59.8 206.6" stroke="#1a1a1a" stroke-width="1.1" fill="none"/><circle cx="54" cy="207.70000000000002" r="1.1" fill="#999"/>
<path d="M54.5 222.6L66.6 220L68.6 231.6L56 235.4Z" fill="#d8d8d8"/><path d="M52 226L55 225.4L56 236L53 236.6Z" fill="#c4c4c4"/>
<path d="M57.6 222V234.9M60.6 221.3V234M63.6 220.6V233.1M54.8 225.8L67.2 223.2M55.2 229L67.7 226.4M55.6 232.2L68.2 229.6" stroke="#8c8c8c" stroke-width="0.9"/><path d="M71.6 236V240.4H67.2Z" fill="#555"/>
<path d="M52.6 254L60 249.6L67.6 250Q70 256 68.4 261.6Q62 265.4 54.6 262.6Z" fill="url(#sM)"/><path d="M54.6 262.6Q62 265.4 68.4 261.6Q64 259 58 259.6Z" fill="#2c2c2c"/>
<ellipse cx="59" cy="282.6" rx="5.6" ry="6.4" fill="url(#sH)"/><path d="M55.4 287H62.6L63.4 291L68.6 293.4V296.6H52.6V294L55.6 291.6Z" fill="#d4d4d4"/><path d="M71.6 294V298.4H67.2Z" fill="#555"/>
<circle cx="59.6" cy="314.8" r="8.4" fill="url(#sO)"/><path d="M53 311H66.4M52 315H67.6M53 319H66.6M56 307.4V322.4M60 306.6V323.2M64 307.4V322.4" stroke="#ffd890" stroke-width="0.6" opacity="0.7"/><path d="M49 324.4Q53.5 319.2 59 323.79999999999995Q54 328.0 49 324.4Z" fill="#1a1a1a"/><path d="M48.4 323.0Q53.5 317.2 59.8 322.59999999999997" stroke="#1a1a1a" stroke-width="1.1" fill="none"/><circle cx="54" cy="323.7" r="1.1" fill="#999"/>
</svg>
<svg class="a" style="left:1610px;top:0" width="310" height="981" viewBox="1610 0 310 981">
<path d="M1616.5 1.4000000000000001H1619.9V-1.0L1624.5 3.2L1619.9 7.4V5.0H1616.5Z" fill="#a8a8a8"/>
<path d="M1616.5 483.4H1619.9V481.0L1624.5 485.2L1619.9 489.4V487.0H1616.5Z" fill="#a8a8a8"/>
<path d="M1903.0 1.2H1899.5V7.2H1906.5V4.7" stroke="#9a9a9a" stroke-width="1.1" fill="none"/><path d="M1903.1 4.2L1908.1 -0.8M1904.7 -1.2H1908.5V2.5999999999999996" stroke="#9a9a9a" stroke-width="1.1" fill="none"/>
<path d="M1903.0 483.4H1899.5V489.4H1906.5V486.9" stroke="#9a9a9a" stroke-width="1.1" fill="none"/><path d="M1903.1 486.4L1908.1 481.4M1904.7 481.0H1908.5V484.79999999999995" stroke="#9a9a9a" stroke-width="1.1" fill="none"/>
<rect x="1881" y="15" width="31" height="22" fill="#1d1d1d"/><rect x="1896" y="15" width="1" height="22" fill="#2a2a2a"/>
<path d="M1890.6 21.4V29.4L1885.6 25.4Z" fill="#8a8a8a"/><path d="M1902.6 21.4V29.4L1907.6 25.4Z" fill="#8a8a8a"/>
<path d="M1644.4 107.6L1648.4 111L1656 104.4" stroke="#e9b731" stroke-width="2.4" fill="none" stroke-linecap="round" stroke-linejoin="round"/>
<path d="M1782 62.5H1790.5V71H1782ZM1784.8 62.5V71M1787.6 62.5V71M1782 65.3H1790.5M1782 68.1H1790.5" stroke="#3c3c3c" stroke-width="1" fill="#343434"/>
<rect x="1847" y="63.5" width="6.5" height="6.5" fill="#3a3a3a"/><path d="M1855 61.5L1857.5 62.6L1855.6 64.4Z" fill="#444"/>
<defs><pattern id="fdots" width="2.6" height="2.6" patternUnits="userSpaceOnUse"><circle cx="1.3" cy="1.3" r="0.7" fill="#2b2b2b"/></pattern></defs><rect x="1669" y="274" width="37" height="37" fill="url(#fdots)"/>
<rect x="1780.5" y="958.5" width="18" height="13" fill="none" stroke="#9a9a9a" stroke-width="1.3"/><path d="M1789.5 958.5V971.5" stroke="#9a9a9a" stroke-width="1.1"/>
<rect x="1811.5" y="958.5" width="18" height="13" fill="none" stroke="#9a9a9a" stroke-width="1.3"/>
<rect x="1842.5" y="958.5" width="18" height="13" fill="none" stroke="#9a9a9a" stroke-width="1.3"/>
<text x="1820.5" y="969" font-family="Liberation Sans, sans-serif" font-size="9" fill="#a4a4a4" text-anchor="middle" style="opacity:0.999">3D</text>
<text x="1851.5" y="969" font-family="Liberation Sans, sans-serif" font-size="9" fill="#a4a4a4" text-anchor="middle" style="opacity:0.999">2D</text>
<rect x="1873" y="956" width="1" height="18" fill="#333"/>
<rect x="1882" y="955" width="20" height="20" fill="#2a2a2b"/>
<path d="M1896 963.4A4 4 0 1 0 1896.4 968" stroke="#a0a0a0" stroke-width="1.7" fill="none"/><path d="M1893.4 960.2H1897.6V964.6Z" fill="#a0a0a0"/>
</svg>
</div></body></html>
